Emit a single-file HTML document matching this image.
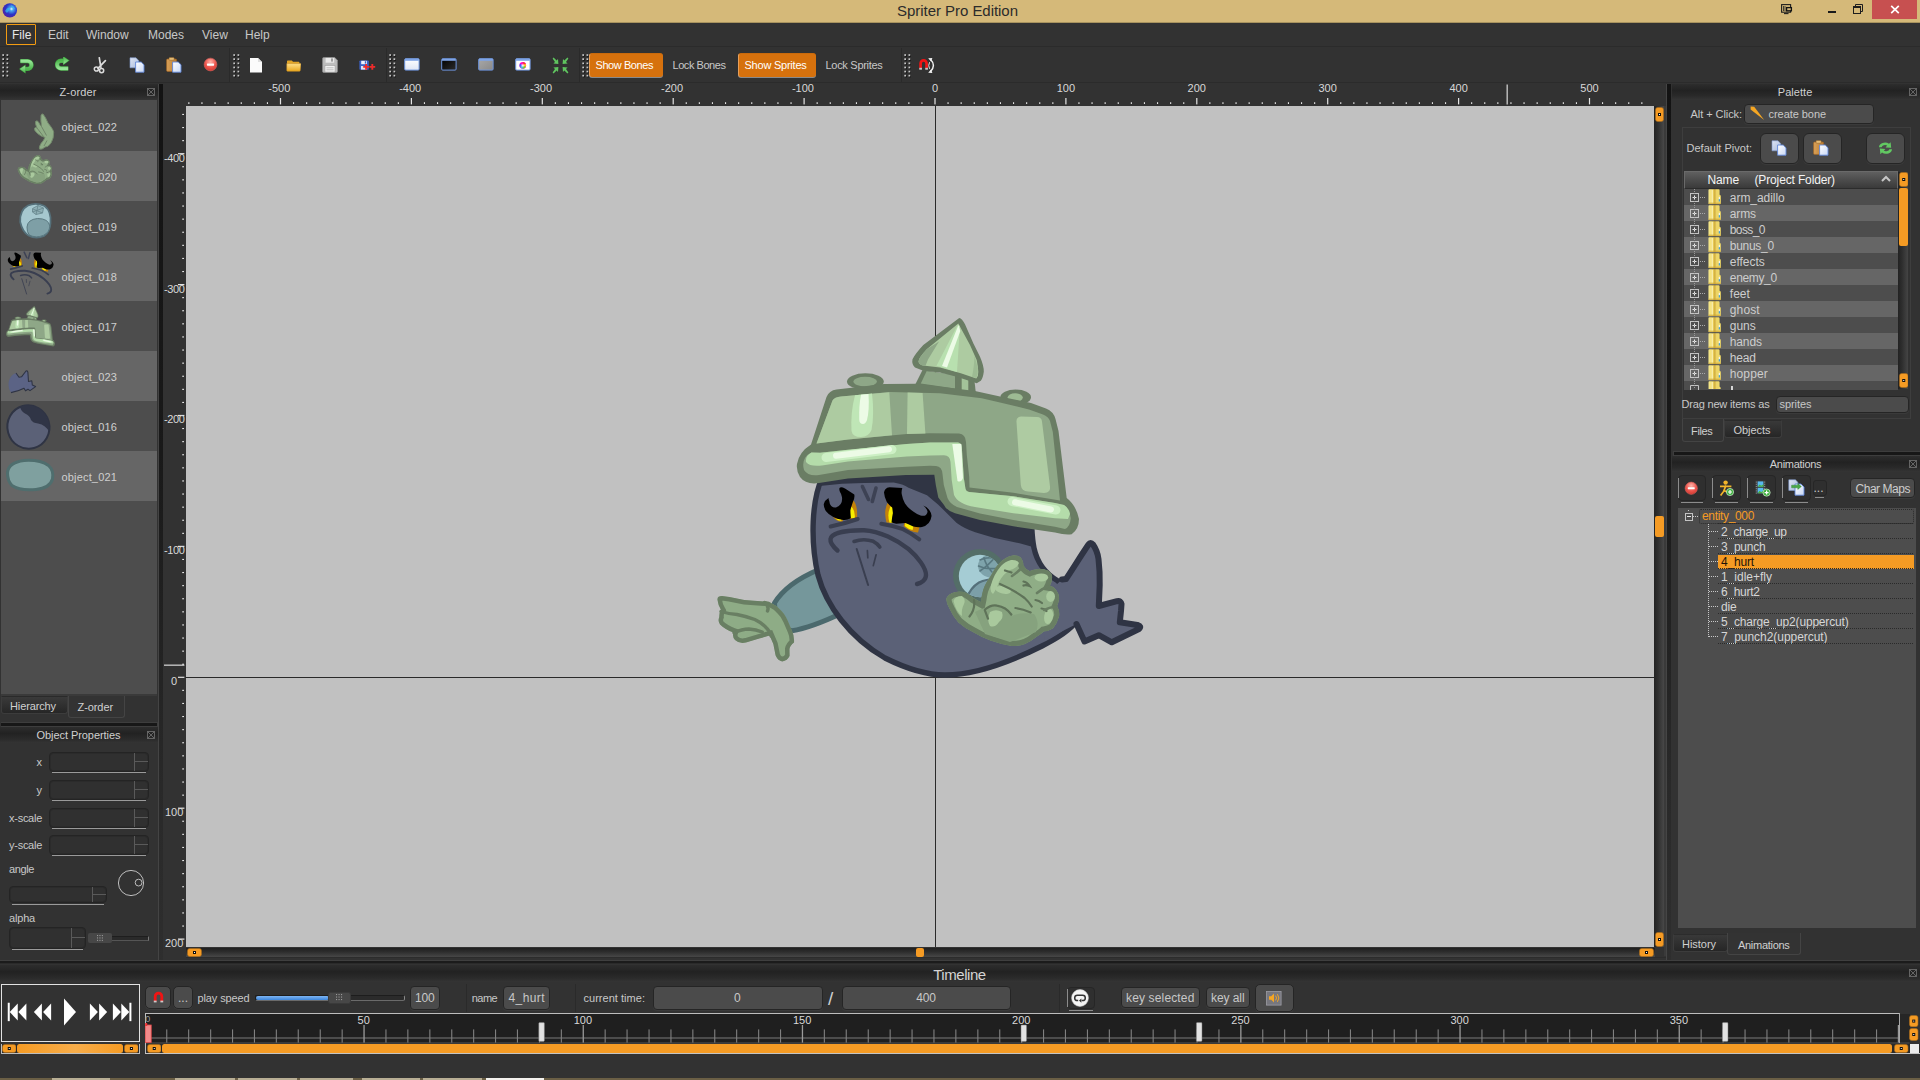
<!DOCTYPE html>
<html><head><meta charset="utf-8"><title>Spriter Pro Edition</title>
<style>
*{box-sizing:border-box;margin:0;padding:0}
html,body{width:1920px;height:1080px;overflow:hidden;background:#323232}
body{font-family:"Liberation Sans",sans-serif;font-size:11px;color:#c8c8c8;position:relative}
.a{position:absolute}
.t{position:absolute;white-space:nowrap}
.grip{position:absolute;width:6px;height:22px;top:54px}
.or{background:#f59b24}
</style></head><body>

<svg width="0" height="0" style="position:absolute"><defs>
<radialGradient id="gl" cx="0.62" cy="0.4" r="0.7"><stop offset="0" stop-color="#e8f4ff"/><stop offset="0.18" stop-color="#4aa8f0"/><stop offset="0.55" stop-color="#2b35c8"/><stop offset="1" stop-color="#5a1e9a"/></radialGradient>
<linearGradient id="gGreen" x1="0" y1="0" x2="0" y2="1"><stop offset="0" stop-color="#96e496"/><stop offset="1" stop-color="#4fb84f"/></linearGradient>
<linearGradient id="gPage" x1="0" y1="0" x2="1" y2="1"><stop offset="0" stop-color="#ffffff"/><stop offset="1" stop-color="#c9d8f5"/></linearGradient>
<linearGradient id="gPageB" x1="0" y1="0" x2="1" y2="1"><stop offset="0" stop-color="#dfe6f4"/><stop offset="1" stop-color="#a9bbdc"/></linearGradient>
<linearGradient id="gClip" x1="0" y1="0" x2="1" y2="0"><stop offset="0" stop-color="#d9a25a"/><stop offset="1" stop-color="#b87a30"/></linearGradient>
<radialGradient id="gRed" cx="0.5" cy="0.3" r="0.7"><stop offset="0" stop-color="#ffb4aa"/><stop offset="0.6" stop-color="#ee564e"/><stop offset="1" stop-color="#d03a32"/></radialGradient>
<linearGradient id="gFold" x1="0" y1="0" x2="0" y2="1"><stop offset="0" stop-color="#ffe08a"/><stop offset="1" stop-color="#e9a820"/></linearGradient>
<linearGradient id="gWin" x1="0" y1="0" x2="0" y2="1"><stop offset="0" stop-color="#ffffff"/><stop offset="1" stop-color="#dfe6f6"/></linearGradient>
<linearGradient id="gWinK" x1="0" y1="0" x2="1" y2="1"><stop offset="0" stop-color="#000"/><stop offset="1" stop-color="#2c2c2c"/></linearGradient>
<linearGradient id="gWinG" x1="0" y1="0" x2="1" y2="1"><stop offset="0" stop-color="#a8a8a8"/><stop offset="1" stop-color="#8a8a8a"/></linearGradient>
<linearGradient id="gFolder2" x1="0" y1="0" x2="1" y2="0"><stop offset="0" stop-color="#f6e88c"/><stop offset="0.3" stop-color="#f3df74"/><stop offset="0.4" stop-color="#e8cc58"/><stop offset="0.52" stop-color="#cfa93a"/><stop offset="0.62" stop-color="#ecd466"/><stop offset="1" stop-color="#f0da68"/></linearGradient>

<symbol id="iCopy" viewBox="0 0 16 16"><path d="M1 .8h6l2.6 2.6v7.4H1z" fill="url(#gPageB)" stroke="#7f9ad0" stroke-width=".6"/><path d="M6.6 5h5.6l2.8 2.8v7.4H6.6z" fill="url(#gPage)" stroke="#5f86d8" stroke-width=".9"/></symbol>
<symbol id="iPaste" viewBox="0 0 16 16"><rect x=".6" y="2" width="10" height="12.4" rx="1" fill="url(#gClip)" stroke="#a4651f" stroke-width=".6"/><rect x="3" y=".6" width="5.2" height="2.6" rx=".8" fill="#e8c07a" stroke="#8a5a20" stroke-width=".5"/><path d="M6.6 5h5.6l2.8 2.8v7.4H6.6z" fill="url(#gPage)" stroke="#5f86d8" stroke-width=".9"/></symbol>
<symbol id="iDel" viewBox="0 0 16 16"><circle cx="8" cy="8" r="6.8" fill="url(#gRed)" stroke="#d9635e" stroke-width=".6"/><rect x="4.2" y="6.8" width="7.6" height="2.4" rx=".6" fill="#fff"/></symbol>
<symbol id="iFolder" viewBox="0 0 13 16"><path d="M.3 1.3q0-1 1-1h9.4q1 0 1 1v4.6q1.3.4 1.3 1.6v7.2q0 .9-1 .9H1.3q-1 0-1-1z" fill="url(#gFolder2)"/><path d="M4.2 1v14" stroke="#fffbe0" stroke-width=".8" opacity=".9"/><path d="M.3 14.6h12.4" stroke="#c9a030" stroke-width=".9"/><rect x="10.9" y="8" width="1.1" height="2.6" fill="#f4f8ff"/><rect x="10.9" y="10.4" width="1.1" height="2.4" fill="#2f9be8"/></symbol>
<symbol id="iX" viewBox="0 0 8 8"><rect x=".5" y=".5" width="7" height="7" fill="none" stroke="#6c6c6c" stroke-width=".9"/><path d="M.8 .8l6.4 6.4M7.2 .8L.8 7.2" stroke="#6c6c6c" stroke-width=".9"/></symbol>
</defs></svg>

<div class="a" style="left:0px;top:0px;width:1920px;height:23px;background:#d5b979;"></div>
<div class="a" style="left:0px;top:22px;width:1920px;height:1px;background:#a8935f;"></div>
<div class="t" style="left:897.0px;top:2px;font-size:15px;line-height:17px;height:17px;letter-spacing:-0.04px;color:#2b2b2b;">Spriter Pro Edition</div>
<svg class="a" style="left:2px;top:2px" width="16" height="16" viewBox="0 0 16 16"><circle cx="7.8" cy="8.4" r="7.2" fill="url(#gl)"/><path d="M3 9q2-4 5-3q-1 3-3 5zM9 3q3 1 4 4q-3 0-4-4z" fill="#35c0f0" opacity=".7"/></svg>
<svg class="a" style="left:1780px;top:3px" width="14" height="13" viewBox="0 0 14 13"><rect x="1.6" y="1.6" width="9" height="7.6" fill="none" stroke="#1e1e1e" stroke-width="1.1"/><path d="M3.5 3v5M5 3v5" stroke="#1e1e1e" stroke-width=".8"/><rect x="6.6" y="4.6" width="4.8" height="3.2" fill="#d5b979" stroke="#111" stroke-width="1.3"/><path d="M4 10.6h4.5" stroke="#1e1e1e" stroke-width="1.1"/></svg>
<div class="a" style="left:1828px;top:11px;width:8px;height:2px;background:#1a1a1a;"></div>
<svg class="a" style="left:1852px;top:3px" width="12" height="12" viewBox="0 0 12 12"><path d="M3.5 3.5v-2h7v7h-2" fill="none" stroke="#1e1e1e" stroke-width="1"/><rect x="1.5" y="3.5" width="7" height="7" fill="none" stroke="#1e1e1e" stroke-width="1"/><path d="M1.5 4.2h7" stroke="#1e1e1e" stroke-width="1.6"/></svg>
<div class="a" style="left:1872px;top:0px;width:45px;height:19px;background:#c75050;"></div>
<svg class="a" style="left:1890px;top:5px" width="10" height="9" viewBox="0 0 10 9"><path d="M1.2 .8L8.8 8.2M8.8 .8L1.2 8.2" stroke="#fff" stroke-width="1.7"/></svg>
<div class="a" style="left:0px;top:23px;width:1920px;height:23px;background:#323232;"></div>
<div class="a" style="left:6px;top:24px;width:30px;height:21px;background:transparent;border:1px solid #f39c12;border-radius:1px"></div>
<div class="t" style="left:12.0px;top:28px;font-size:12px;line-height:14px;height:14px;color:#e8e8e8;">File</div>
<div class="t" style="left:48.0px;top:28px;font-size:12px;line-height:14px;height:14px;">Edit</div>
<div class="t" style="left:86.0px;top:28px;font-size:12px;line-height:14px;height:14px;">Window</div>
<div class="t" style="left:148.0px;top:28px;font-size:12px;line-height:14px;height:14px;">Modes</div>
<div class="t" style="left:202.0px;top:28px;font-size:12px;line-height:14px;height:14px;">View</div>
<div class="t" style="left:245.0px;top:28px;font-size:12px;line-height:14px;height:14px;">Help</div>
<div class="a" style="left:0px;top:46px;width:1920px;height:1px;background:#2b2b2b;"></div>
<div class="a" style="left:0px;top:82px;width:1920px;height:1px;background:#2b2b2b;"></div>
<svg class="a" style="left:2px;top:54px" width="8" height="24" viewBox="0 0 8 24"><rect x="1.1" y="1.1" width="1.7" height="1.7" fill="#161616"/><rect x="0.3" y="0.2" width="1.7" height="1.7" fill="#c6c6c6"/><rect x="5.2" y="1.1" width="1.7" height="1.7" fill="#161616"/><rect x="4.5" y="0.2" width="1.7" height="1.7" fill="#c6c6c6"/><rect x="1.1" y="5.2" width="1.7" height="1.7" fill="#161616"/><rect x="0.3" y="4.3" width="1.7" height="1.7" fill="#c6c6c6"/><rect x="5.2" y="5.2" width="1.7" height="1.7" fill="#161616"/><rect x="4.5" y="4.3" width="1.7" height="1.7" fill="#c6c6c6"/><rect x="1.1" y="9.4" width="1.7" height="1.7" fill="#161616"/><rect x="0.3" y="8.5" width="1.7" height="1.7" fill="#c6c6c6"/><rect x="5.2" y="9.4" width="1.7" height="1.7" fill="#161616"/><rect x="4.5" y="8.5" width="1.7" height="1.7" fill="#c6c6c6"/><rect x="1.1" y="13.5" width="1.7" height="1.7" fill="#161616"/><rect x="0.3" y="12.6" width="1.7" height="1.7" fill="#c6c6c6"/><rect x="5.2" y="13.5" width="1.7" height="1.7" fill="#161616"/><rect x="4.5" y="12.6" width="1.7" height="1.7" fill="#c6c6c6"/><rect x="1.1" y="17.6" width="1.7" height="1.7" fill="#161616"/><rect x="0.3" y="16.7" width="1.7" height="1.7" fill="#c6c6c6"/><rect x="5.2" y="17.6" width="1.7" height="1.7" fill="#161616"/><rect x="4.5" y="16.7" width="1.7" height="1.7" fill="#c6c6c6"/><rect x="1.1" y="21.7" width="1.7" height="1.7" fill="#161616"/><rect x="0.3" y="20.8" width="1.7" height="1.7" fill="#c6c6c6"/><rect x="5.2" y="21.7" width="1.7" height="1.7" fill="#161616"/><rect x="4.5" y="20.8" width="1.7" height="1.7" fill="#c6c6c6"/></svg>
<svg class="a" style="left:232.5px;top:54px" width="8" height="24" viewBox="0 0 8 24"><rect x="1.1" y="1.1" width="1.7" height="1.7" fill="#161616"/><rect x="0.3" y="0.2" width="1.7" height="1.7" fill="#c6c6c6"/><rect x="5.2" y="1.1" width="1.7" height="1.7" fill="#161616"/><rect x="4.5" y="0.2" width="1.7" height="1.7" fill="#c6c6c6"/><rect x="1.1" y="5.2" width="1.7" height="1.7" fill="#161616"/><rect x="0.3" y="4.3" width="1.7" height="1.7" fill="#c6c6c6"/><rect x="5.2" y="5.2" width="1.7" height="1.7" fill="#161616"/><rect x="4.5" y="4.3" width="1.7" height="1.7" fill="#c6c6c6"/><rect x="1.1" y="9.4" width="1.7" height="1.7" fill="#161616"/><rect x="0.3" y="8.5" width="1.7" height="1.7" fill="#c6c6c6"/><rect x="5.2" y="9.4" width="1.7" height="1.7" fill="#161616"/><rect x="4.5" y="8.5" width="1.7" height="1.7" fill="#c6c6c6"/><rect x="1.1" y="13.5" width="1.7" height="1.7" fill="#161616"/><rect x="0.3" y="12.6" width="1.7" height="1.7" fill="#c6c6c6"/><rect x="5.2" y="13.5" width="1.7" height="1.7" fill="#161616"/><rect x="4.5" y="12.6" width="1.7" height="1.7" fill="#c6c6c6"/><rect x="1.1" y="17.6" width="1.7" height="1.7" fill="#161616"/><rect x="0.3" y="16.7" width="1.7" height="1.7" fill="#c6c6c6"/><rect x="5.2" y="17.6" width="1.7" height="1.7" fill="#161616"/><rect x="4.5" y="16.7" width="1.7" height="1.7" fill="#c6c6c6"/><rect x="1.1" y="21.7" width="1.7" height="1.7" fill="#161616"/><rect x="0.3" y="20.8" width="1.7" height="1.7" fill="#c6c6c6"/><rect x="5.2" y="21.7" width="1.7" height="1.7" fill="#161616"/><rect x="4.5" y="20.8" width="1.7" height="1.7" fill="#c6c6c6"/></svg>
<svg class="a" style="left:389px;top:54px" width="8" height="24" viewBox="0 0 8 24"><rect x="1.1" y="1.1" width="1.7" height="1.7" fill="#161616"/><rect x="0.3" y="0.2" width="1.7" height="1.7" fill="#c6c6c6"/><rect x="5.2" y="1.1" width="1.7" height="1.7" fill="#161616"/><rect x="4.5" y="0.2" width="1.7" height="1.7" fill="#c6c6c6"/><rect x="1.1" y="5.2" width="1.7" height="1.7" fill="#161616"/><rect x="0.3" y="4.3" width="1.7" height="1.7" fill="#c6c6c6"/><rect x="5.2" y="5.2" width="1.7" height="1.7" fill="#161616"/><rect x="4.5" y="4.3" width="1.7" height="1.7" fill="#c6c6c6"/><rect x="1.1" y="9.4" width="1.7" height="1.7" fill="#161616"/><rect x="0.3" y="8.5" width="1.7" height="1.7" fill="#c6c6c6"/><rect x="5.2" y="9.4" width="1.7" height="1.7" fill="#161616"/><rect x="4.5" y="8.5" width="1.7" height="1.7" fill="#c6c6c6"/><rect x="1.1" y="13.5" width="1.7" height="1.7" fill="#161616"/><rect x="0.3" y="12.6" width="1.7" height="1.7" fill="#c6c6c6"/><rect x="5.2" y="13.5" width="1.7" height="1.7" fill="#161616"/><rect x="4.5" y="12.6" width="1.7" height="1.7" fill="#c6c6c6"/><rect x="1.1" y="17.6" width="1.7" height="1.7" fill="#161616"/><rect x="0.3" y="16.7" width="1.7" height="1.7" fill="#c6c6c6"/><rect x="5.2" y="17.6" width="1.7" height="1.7" fill="#161616"/><rect x="4.5" y="16.7" width="1.7" height="1.7" fill="#c6c6c6"/><rect x="1.1" y="21.7" width="1.7" height="1.7" fill="#161616"/><rect x="0.3" y="20.8" width="1.7" height="1.7" fill="#c6c6c6"/><rect x="5.2" y="21.7" width="1.7" height="1.7" fill="#161616"/><rect x="4.5" y="20.8" width="1.7" height="1.7" fill="#c6c6c6"/></svg>
<svg class="a" style="left:582px;top:54px" width="8" height="24" viewBox="0 0 8 24"><rect x="1.1" y="1.1" width="1.7" height="1.7" fill="#161616"/><rect x="0.3" y="0.2" width="1.7" height="1.7" fill="#c6c6c6"/><rect x="5.2" y="1.1" width="1.7" height="1.7" fill="#161616"/><rect x="4.5" y="0.2" width="1.7" height="1.7" fill="#c6c6c6"/><rect x="1.1" y="5.2" width="1.7" height="1.7" fill="#161616"/><rect x="0.3" y="4.3" width="1.7" height="1.7" fill="#c6c6c6"/><rect x="5.2" y="5.2" width="1.7" height="1.7" fill="#161616"/><rect x="4.5" y="4.3" width="1.7" height="1.7" fill="#c6c6c6"/><rect x="1.1" y="9.4" width="1.7" height="1.7" fill="#161616"/><rect x="0.3" y="8.5" width="1.7" height="1.7" fill="#c6c6c6"/><rect x="5.2" y="9.4" width="1.7" height="1.7" fill="#161616"/><rect x="4.5" y="8.5" width="1.7" height="1.7" fill="#c6c6c6"/><rect x="1.1" y="13.5" width="1.7" height="1.7" fill="#161616"/><rect x="0.3" y="12.6" width="1.7" height="1.7" fill="#c6c6c6"/><rect x="5.2" y="13.5" width="1.7" height="1.7" fill="#161616"/><rect x="4.5" y="12.6" width="1.7" height="1.7" fill="#c6c6c6"/><rect x="1.1" y="17.6" width="1.7" height="1.7" fill="#161616"/><rect x="0.3" y="16.7" width="1.7" height="1.7" fill="#c6c6c6"/><rect x="5.2" y="17.6" width="1.7" height="1.7" fill="#161616"/><rect x="4.5" y="16.7" width="1.7" height="1.7" fill="#c6c6c6"/><rect x="1.1" y="21.7" width="1.7" height="1.7" fill="#161616"/><rect x="0.3" y="20.8" width="1.7" height="1.7" fill="#c6c6c6"/><rect x="5.2" y="21.7" width="1.7" height="1.7" fill="#161616"/><rect x="4.5" y="20.8" width="1.7" height="1.7" fill="#c6c6c6"/></svg>
<svg class="a" style="left:904px;top:54px" width="8" height="24" viewBox="0 0 8 24"><rect x="1.1" y="1.1" width="1.7" height="1.7" fill="#161616"/><rect x="0.3" y="0.2" width="1.7" height="1.7" fill="#c6c6c6"/><rect x="5.2" y="1.1" width="1.7" height="1.7" fill="#161616"/><rect x="4.5" y="0.2" width="1.7" height="1.7" fill="#c6c6c6"/><rect x="1.1" y="5.2" width="1.7" height="1.7" fill="#161616"/><rect x="0.3" y="4.3" width="1.7" height="1.7" fill="#c6c6c6"/><rect x="5.2" y="5.2" width="1.7" height="1.7" fill="#161616"/><rect x="4.5" y="4.3" width="1.7" height="1.7" fill="#c6c6c6"/><rect x="1.1" y="9.4" width="1.7" height="1.7" fill="#161616"/><rect x="0.3" y="8.5" width="1.7" height="1.7" fill="#c6c6c6"/><rect x="5.2" y="9.4" width="1.7" height="1.7" fill="#161616"/><rect x="4.5" y="8.5" width="1.7" height="1.7" fill="#c6c6c6"/><rect x="1.1" y="13.5" width="1.7" height="1.7" fill="#161616"/><rect x="0.3" y="12.6" width="1.7" height="1.7" fill="#c6c6c6"/><rect x="5.2" y="13.5" width="1.7" height="1.7" fill="#161616"/><rect x="4.5" y="12.6" width="1.7" height="1.7" fill="#c6c6c6"/><rect x="1.1" y="17.6" width="1.7" height="1.7" fill="#161616"/><rect x="0.3" y="16.7" width="1.7" height="1.7" fill="#c6c6c6"/><rect x="5.2" y="17.6" width="1.7" height="1.7" fill="#161616"/><rect x="4.5" y="16.7" width="1.7" height="1.7" fill="#c6c6c6"/><rect x="1.1" y="21.7" width="1.7" height="1.7" fill="#161616"/><rect x="0.3" y="20.8" width="1.7" height="1.7" fill="#c6c6c6"/><rect x="5.2" y="21.7" width="1.7" height="1.7" fill="#161616"/><rect x="4.5" y="20.8" width="1.7" height="1.7" fill="#c6c6c6"/></svg>
<div class="a" style="left:229px;top:48px;width:1px;height:34px;background:#2a2a2a;"></div>
<div class="a" style="left:386px;top:48px;width:1px;height:34px;background:#2a2a2a;"></div>
<div class="a" style="left:578.5px;top:48px;width:1px;height:34px;background:#2a2a2a;"></div>
<div class="a" style="left:901px;top:48px;width:1px;height:34px;background:#2a2a2a;"></div>
<svg class="a" style="left:19.2px;top:57.8px" width="15" height="16" viewBox="0 0 15 16"><path d="M1.4 3.1H8.6A3.9 3.9 0 0 1 8.6 10.9H6" fill="none" stroke="#3f9f3f" stroke-width="4.4"/><path d="M0 11.1L6.6 6.4V15.6Z" fill="#3f9f3f"/><path d="M1.4 3.1H8.6A3.9 3.9 0 0 1 8.6 10.9H6" fill="none" stroke="url(#gGreen)" stroke-width="3.4"/><path d="M.9 11.1L6.1 7.4V14.7Z" fill="url(#gGreen)"/></svg>
<svg class="a" style="left:55.2px;top:57.2px" width="15" height="16" viewBox="0 0 15 16"><g transform="translate(14.6,14.6) scale(-1,-1)"><path d="M1.4 3.1H8.6A3.9 3.9 0 0 1 8.6 10.9H6" fill="none" stroke="#3f9f3f" stroke-width="4.4"/><path d="M0 11.1L6.6 6.4V15.6Z" fill="#3f9f3f"/><path d="M1.4 3.1H8.6A3.9 3.9 0 0 1 8.6 10.9H6" fill="none" stroke="url(#gGreen)" stroke-width="3.4"/><path d="M.9 11.1L6.1 7.4V14.7Z" fill="url(#gGreen)"/></g></svg>
<svg class="a" style="left:93px;top:57px" width="14" height="17" viewBox="0 0 14 17"><path d="M6.3 .8L7.9 10.4M12.4 3.6L5 11.4" stroke="#dcdcdc" stroke-width="1.7" fill="none" stroke-linecap="round"/><circle cx="3.4" cy="12" r="2.1" fill="none" stroke="#dcdcdc" stroke-width="1.5"/><circle cx="8.6" cy="13.6" r="2.1" fill="none" stroke="#dcdcdc" stroke-width="1.5"/></svg>
<svg class="a" style="left:129px;top:57px" width="16" height="16"><use href="#iCopy"/></svg>
<svg class="a" style="left:166px;top:57px" width="16" height="16"><use href="#iPaste"/></svg>
<svg class="a" style="left:203px;top:57px" width="15" height="15"><use href="#iDel"/></svg>
<svg class="a" style="left:249px;top:57px" width="14" height="16" viewBox="0 0 14 16"><path d="M1 1h8l4 4v10.4H1z" fill="#fbfbfb"/><path d="M9 1v4h4z" fill="#e0e0e0"/></svg>
<svg class="a" style="left:285.5px;top:59px" width="15" height="13" viewBox="0 0 15 13"><path d="M1 2.2q0-.8.8-.8h4l1.2 1.4h5.6q.8 0 .8.8v1.2H1z" fill="#e2a528"/><path d="M.8 4.6h13.6q.6 0 .5.7l-.7 6.3q-.1.6-.7.6H1.5q-.6 0-.7-.6z" fill="url(#gFold)" stroke="#d8961e" stroke-width=".5"/></svg>
<svg class="a" style="left:322px;top:57px" width="16" height="16" viewBox="0 0 16 16"><path d="M.6 1.6q0-1 1-1h11.2l2.6 2.6v11.2q0 1-1 1H1.6q-1 0-1-1z" fill="#bdbdbd" stroke="#8f8f8f" stroke-width=".7"/><rect x="3.6" y=".9" width="8.6" height="4.8" fill="#e9e9e9"/><rect x="9.2" y="1.4" width="1.6" height="3.2" fill="#8a8a8a"/><rect x="3" y="8.6" width="10" height="6.4" fill="#f2f2f2" stroke="#9a9a9a" stroke-width=".5"/><path d="M4.4 10.8h7.2M4.4 12.8h7.2" stroke="#aaa" stroke-width=".7"/></svg>
<svg class="a" style="left:359px;top:59.5px" width="17" height="11" viewBox="0 0 17 11"><rect x=".4" y=".4" width="9.4" height="9.4" rx=".8" fill="#3b62c8"/><rect x="2.2" y=".8" width="5.6" height="3.4" fill="#eef1fa"/><rect x="5.8" y="1.2" width="1.2" height="2.4" fill="#3b62c8"/><rect x="2" y="6" width="6" height="3.6" fill="#dfe5f5"/><path d="M4.2 6.9h5.8M7.1 4v5.8M10.4 6.9h5.8M13.3 4v5.8" stroke="#ee2b2b" stroke-width="1.9"/></svg>
<svg class="a" style="left:404px;top:58px" width="16" height="13" viewBox="0 0 16 13"><rect x=".7" y=".7" width="14.4" height="11.4" rx="1" fill="url(#gWin)" stroke="#6d94dd" stroke-width="1"/><path d="M1 1.8h13.8" stroke="#7ea4e6" stroke-width="2"/></svg>
<svg class="a" style="left:441px;top:58px" width="16" height="13" viewBox="0 0 16 13"><rect x=".7" y=".7" width="14.4" height="11.4" rx="1" fill="url(#gWinK)" stroke="#6d94dd" stroke-width="1"/><path d="M1 1.8h13.8" stroke="#7ea4e6" stroke-width="2"/></svg>
<svg class="a" style="left:478px;top:58px" width="16" height="13" viewBox="0 0 16 13"><rect x=".7" y=".7" width="14.4" height="11.4" rx="1" fill="url(#gWinG)" stroke="#6d94dd" stroke-width="1"/><path d="M1 1.8h13.8" stroke="#7ea4e6" stroke-width="2"/></svg>
<svg class="a" style="left:515px;top:58px" width="16" height="13" viewBox="0 0 16 13"><defs><radialGradient id="cw"><stop offset="0" stop-color="#fff"/><stop offset="1" stop-color="#fff" stop-opacity="0"/></radialGradient></defs><rect x=".7" y=".7" width="14.4" height="11.4" rx="1" fill="#fff" stroke="#6d94dd" stroke-width="1"/><path d="M1 1.8h13.8" stroke="#7ea4e6" stroke-width="2"/><circle cx="7.8" cy="7.4" r="3.3" fill="#f0c"/><path d="M7.8 7.4L7.8 4.1A3.3 3.3 0 0 1 10.7 5.8z" fill="#f33"/><path d="M7.8 7.4L10.7 5.8A3.3 3.3 0 0 1 10.7 9z" fill="#fc0"/><path d="M7.8 7.4L10.7 9A3.3 3.3 0 0 1 7.8 10.7z" fill="#6d3"/><path d="M7.8 7.4L7.8 10.7A3.3 3.3 0 0 1 4.9 9z" fill="#3cd"/><path d="M7.8 7.4L4.9 9A3.3 3.3 0 0 1 4.9 5.8z" fill="#46f"/><circle cx="7.8" cy="7.4" r="2.2" fill="url(#cw)"/></svg>
<svg class="a" style="left:552px;top:57px" width="17" height="17" viewBox="0 0 17 17"><path d="M.6 1.4l1-1 3 3 1.4-1.4.4 5-5-.4 1.6-1.6z" fill="#5fc45f"/><g transform="translate(17,0) scale(-1,1)"><path d="M.6 1.4l1-1 3 3 1.4-1.4.4 5-5-.4 1.6-1.6z" fill="#5fc45f"/></g><g transform="translate(0,17) scale(1,-1)"><path d="M.6 1.4l1-1 3 3 1.4-1.4.4 5-5-.4 1.6-1.6z" fill="#5fc45f"/></g><g transform="translate(17,17) scale(-1,-1)"><path d="M.6 1.4l1-1 3 3 1.4-1.4.4 5-5-.4 1.6-1.6z" fill="#5fc45f"/></g></svg>
<div class="a" style="left:588.5px;top:53px;width:74px;height:23.5px;background:#d6710d;border-radius:3px;border-left:1px solid #e9a05a;border-top:1px solid #c96a0c;box-shadow:0 1px 0 #8a8a8a"></div>
<div class="a" style="left:737.5px;top:53px;width:78px;height:23.5px;background:#d6710d;border-radius:3px;border-left:1px solid #e9a05a;border-top:1px solid #c96a0c;box-shadow:0 1px 0 #8a8a8a"></div>
<div class="t" style="left:595.5px;top:59px;font-size:11px;line-height:12px;height:12px;letter-spacing:-0.43px;color:#fff;">Show Bones</div>
<div class="t" style="left:672.5px;top:59px;font-size:11px;line-height:12px;height:12px;letter-spacing:-0.45px;">Lock Bones</div>
<div class="t" style="left:744.5px;top:59px;font-size:11px;line-height:12px;height:12px;letter-spacing:-0.23px;color:#fff;">Show Sprites</div>
<div class="t" style="left:825.5px;top:59px;font-size:11px;line-height:12px;height:12px;letter-spacing:-0.29px;">Lock Sprites</div>
<svg class="a" style="left:919px;top:57px" width="18" height="17" viewBox="0 0 18 17"><path d="M1.6 11.4V6.4a3 3 0 0 1 6 0V11.4" fill="none" stroke="#f01414" stroke-width="2.7"/><rect x=".25" y="10.8" width="2.7" height="1.9" fill="#c4c4c4"/><rect x="6.25" y="10.8" width="2.7" height="1.9" fill="#c4c4c4"/><path d="M11.6 2.6Q17.2 8.4 11.6 14.4" fill="none" stroke="#f2f2f2" stroke-width="1.4"/><path d="M9.2 1.2l4.2-.2-1.4 3.6zM9.2 15.8l4.2.2-1.4-3.6z" fill="#f2f2f2"/><path d="M10.6 5.2Q8.8 8.4 10.6 11.8" fill="none" stroke="#e0e0e0" stroke-width="1"/></svg>
<div class="a" style="left:0px;top:83px;width:159px;height:880px;background:#323232;"></div>
<div class="a" style="left:159px;top:84px;width:4.2px;height:876px;background:linear-gradient(#131313,#191919 42%,#292929 80%,#2e2e2e);"></div>
<div class="a" style="left:158px;top:84px;width:1px;height:876px;background:#444;"></div>
<div class="a" style="left:0px;top:84px;width:158px;height:16px;background:linear-gradient(#2d2d2d,#222 40%,#2a2a2a 75%,#343434);"></div>
<div class="t" style="left:59.5px;top:86px;font-size:11px;line-height:12px;height:12px;letter-spacing:0.13px;color:#d0d0d0;">Z-order</div>
<svg class="a" style="left:147px;top:88px" width="8" height="8"><use href="#iX"/></svg>
<div class="a" style="left:1px;top:100px;width:156px;height:595px;background:#4d4d4d;"></div>
<div class="t" style="left:61.5px;top:121px;font-size:11px;line-height:12px;height:12px;letter-spacing:0.17px;color:#cfcfcf;">object_022</div>
<div class="a" style="left:1px;top:151px;width:156px;height:50px;background:#666666;"></div>
<div class="t" style="left:61.5px;top:171px;font-size:11px;line-height:12px;height:12px;letter-spacing:0.17px;color:#cfcfcf;">object_020</div>
<div class="t" style="left:61.5px;top:221px;font-size:11px;line-height:12px;height:12px;letter-spacing:0.17px;color:#cfcfcf;">object_019</div>
<div class="a" style="left:1px;top:251px;width:156px;height:50px;background:#666666;"></div>
<div class="t" style="left:61.5px;top:271px;font-size:11px;line-height:12px;height:12px;letter-spacing:0.17px;color:#cfcfcf;">object_018</div>
<div class="t" style="left:61.5px;top:321px;font-size:11px;line-height:12px;height:12px;letter-spacing:0.17px;color:#cfcfcf;">object_017</div>
<div class="a" style="left:1px;top:351px;width:156px;height:50px;background:#666666;"></div>
<div class="t" style="left:61.5px;top:371px;font-size:11px;line-height:12px;height:12px;letter-spacing:0.17px;color:#cfcfcf;">object_023</div>
<div class="t" style="left:61.5px;top:421px;font-size:11px;line-height:12px;height:12px;letter-spacing:0.17px;color:#cfcfcf;">object_016</div>
<div class="a" style="left:1px;top:451px;width:156px;height:50px;background:#666666;"></div>
<div class="t" style="left:61.5px;top:471px;font-size:11px;line-height:12px;height:12px;letter-spacing:0.17px;color:#cfcfcf;">object_021</div>
<div class="a" style="left:1px;top:694px;width:156px;height:1.5px;background:#3a3a3a;"></div>
<div class="a" style="left:1px;top:696px;width:66.5px;height:18px;background:linear-gradient(#3a3a3a,#262626);border:1px solid #3c3c3c;border-top-color:#2a2a2a;border-radius:0 0 3px 3px"></div>
<div class="t" style="left:10.0px;top:700px;font-size:11px;line-height:12px;height:12px;letter-spacing:-0.12px;color:#d0d0d0;">Hierarchy</div>
<div class="a" style="left:67.5px;top:696px;width:57.5px;height:21.5px;background:#333;border:1px solid #444;border-top:none;border-radius:0 0 3px 3px"></div>
<div class="t" style="left:77.5px;top:701px;font-size:11px;line-height:12px;height:12px;letter-spacing:-0.08px;color:#d0d0d0;">Z-order</div>
<div class="a" style="left:1px;top:722px;width:156.5px;height:4.5px;background:#171717;border:1px solid #3d3d3d;border-left:none"></div>
<div class="a" style="left:0px;top:727px;width:158px;height:16px;background:linear-gradient(#2d2d2d,#222 40%,#2a2a2a 75%,#343434);"></div>
<div class="t" style="left:36.5px;top:729px;font-size:11px;line-height:12px;height:12px;letter-spacing:-0.06px;color:#d0d0d0;">Object Properties</div>
<svg class="a" style="left:147px;top:731px" width="8" height="8"><use href="#iX"/></svg>
<div class="a" style="left:49px;top:752px;width:99.5px;height:19.5px;background:#303030;border:1px solid #242424;border-radius:4px;box-shadow:inset 0 0 0 1px #2b2b2b"></div>
<div class="a" style="left:133.5px;top:753px;width:1px;height:17.5px;background:#5a5a5a;"></div>
<div class="a" style="left:134.5px;top:761.25px;width:13px;height:1px;background:#5a5a5a;"></div>
<div class="a" style="left:52px;top:772.1px;width:93.5px;height:1px;background:#9a9a9a;"></div>
<div class="t" style="left:36.5px;top:756px;font-size:11px;line-height:12px;height:12px;">x</div>
<div class="a" style="left:49px;top:780px;width:99.5px;height:19.5px;background:#303030;border:1px solid #242424;border-radius:4px;box-shadow:inset 0 0 0 1px #2b2b2b"></div>
<div class="a" style="left:133.5px;top:781px;width:1px;height:17.5px;background:#5a5a5a;"></div>
<div class="a" style="left:134.5px;top:789.25px;width:13px;height:1px;background:#5a5a5a;"></div>
<div class="a" style="left:52px;top:800.1px;width:93.5px;height:1px;background:#9a9a9a;"></div>
<div class="t" style="left:36.5px;top:784px;font-size:11px;line-height:12px;height:12px;">y</div>
<div class="a" style="left:49px;top:808px;width:99.5px;height:19.5px;background:#303030;border:1px solid #242424;border-radius:4px;box-shadow:inset 0 0 0 1px #2b2b2b"></div>
<div class="a" style="left:133.5px;top:809px;width:1px;height:17.5px;background:#5a5a5a;"></div>
<div class="a" style="left:134.5px;top:817.25px;width:13px;height:1px;background:#5a5a5a;"></div>
<div class="a" style="left:52px;top:828.1px;width:93.5px;height:1px;background:#9a9a9a;"></div>
<div class="t" style="left:9.0px;top:812px;font-size:11px;line-height:12px;height:12px;letter-spacing:-0.26px;">x-scale</div>
<div class="a" style="left:49px;top:835px;width:99.5px;height:19.5px;background:#303030;border:1px solid #242424;border-radius:4px;box-shadow:inset 0 0 0 1px #2b2b2b"></div>
<div class="a" style="left:133.5px;top:836px;width:1px;height:17.5px;background:#5a5a5a;"></div>
<div class="a" style="left:134.5px;top:844.25px;width:13px;height:1px;background:#5a5a5a;"></div>
<div class="a" style="left:52px;top:855.1px;width:93.5px;height:1px;background:#9a9a9a;"></div>
<div class="t" style="left:9.0px;top:839px;font-size:11px;line-height:12px;height:12px;letter-spacing:-0.26px;">y-scale</div>
<div class="t" style="left:9.0px;top:863px;font-size:11px;line-height:12px;height:12px;letter-spacing:-0.38px;">angle</div>
<div class="a" style="left:9px;top:885.5px;width:97.5px;height:17.5px;background:#303030;border:1px solid #242424;border-radius:4px;box-shadow:inset 0 0 0 1px #2b2b2b"></div>
<div class="a" style="left:91.5px;top:886.5px;width:1px;height:15.5px;background:#5a5a5a;"></div>
<div class="a" style="left:92.5px;top:893.75px;width:13px;height:1px;background:#5a5a5a;"></div>
<div class="a" style="left:12px;top:903.6px;width:91.5px;height:1px;background:#9a9a9a;"></div>
<svg class="a" style="left:116px;top:868px" width="30" height="30" viewBox="0 0 30 30"><circle cx="15" cy="15" r="12.6" fill="none" stroke="#bdbdbd" stroke-width="1"/><circle cx="22.6" cy="14.6" r="3.4" fill="none" stroke="#bdbdbd" stroke-width="1"/></svg>
<div class="t" style="left:9.0px;top:912px;font-size:11px;line-height:12px;height:12px;letter-spacing:-0.18px;">alpha</div>
<div class="a" style="left:9px;top:927px;width:76.5px;height:21.5px;background:#303030;border:1px solid #242424;border-radius:4px;box-shadow:inset 0 0 0 1px #2b2b2b"></div>
<div class="a" style="left:70.5px;top:928px;width:1px;height:19.5px;background:#5a5a5a;"></div>
<div class="a" style="left:71.5px;top:937.25px;width:13px;height:1px;background:#5a5a5a;"></div>
<div class="a" style="left:12px;top:949.1px;width:70.5px;height:1px;background:#9a9a9a;"></div>
<div class="a" style="left:111px;top:936px;width:37.5px;height:4.5px;background:#2a2a2a;border:1px solid #1e1e1e;border-right:1px solid #777;border-bottom:1px solid #555"></div>
<div class="a" style="left:88px;top:932.5px;width:23.5px;height:10.5px;background:#474747;border-radius:2px"></div>
<svg class="a" style="left:96.5px;top:934.6px" width="7" height="7" viewBox="0 0 7 7"><rect x="0.0" y="0.0" width="1.1" height="1.1" fill="#9a9a9a"/><rect x="2.4" y="0.0" width="1.1" height="1.1" fill="#9a9a9a"/><rect x="4.8" y="0.0" width="1.1" height="1.1" fill="#9a9a9a"/><rect x="0.0" y="2.4" width="1.1" height="1.1" fill="#9a9a9a"/><rect x="2.4" y="2.4" width="1.1" height="1.1" fill="#9a9a9a"/><rect x="4.8" y="2.4" width="1.1" height="1.1" fill="#9a9a9a"/><rect x="0.0" y="4.8" width="1.1" height="1.1" fill="#9a9a9a"/><rect x="2.4" y="4.8" width="1.1" height="1.1" fill="#9a9a9a"/><rect x="4.8" y="4.8" width="1.1" height="1.1" fill="#9a9a9a"/></svg>
<div class="a" style="left:163.5px;top:84px;width:1504px;height:22px;background:#323232;"></div>
<div class="a" style="left:163.5px;top:84px;width:22.5px;height:876px;background:#323232;"></div>
<div class="a" style="left:186px;top:106px;width:1468px;height:841px;background:#c1c1c1;"></div>
<svg class="a" style="left:0px;top:0px" width="1700" height="960" viewBox="0 0 1700 960"><rect x="188.3" y="102.2" width="1.1" height="1.8" fill="#e4e4e4"/><rect x="201.4" y="102.2" width="1.1" height="1.8" fill="#e4e4e4"/><rect x="214.5" y="102.2" width="1.1" height="1.8" fill="#e4e4e4"/><rect x="227.6" y="102.2" width="1.1" height="1.8" fill="#e4e4e4"/><rect x="240.7" y="102.2" width="1.1" height="1.8" fill="#e4e4e4"/><rect x="253.8" y="102.2" width="1.1" height="1.8" fill="#e4e4e4"/><rect x="266.9" y="102.2" width="1.1" height="1.8" fill="#e4e4e4"/><rect x="279.9" y="98" width="1.2" height="6.4" fill="#e4e4e4"/><rect x="293.0" y="102.2" width="1.1" height="1.8" fill="#e4e4e4"/><rect x="306.1" y="102.2" width="1.1" height="1.8" fill="#e4e4e4"/><rect x="319.2" y="102.2" width="1.1" height="1.8" fill="#e4e4e4"/><rect x="332.3" y="102.2" width="1.1" height="1.8" fill="#e4e4e4"/><rect x="345.4" y="102.2" width="1.1" height="1.8" fill="#e4e4e4"/><rect x="358.5" y="102.2" width="1.1" height="1.8" fill="#e4e4e4"/><rect x="371.6" y="102.2" width="1.1" height="1.8" fill="#e4e4e4"/><rect x="384.7" y="102.2" width="1.1" height="1.8" fill="#e4e4e4"/><rect x="397.8" y="102.2" width="1.1" height="1.8" fill="#e4e4e4"/><rect x="410.8" y="98" width="1.2" height="6.4" fill="#e4e4e4"/><rect x="423.9" y="102.2" width="1.1" height="1.8" fill="#e4e4e4"/><rect x="437.0" y="102.2" width="1.1" height="1.8" fill="#e4e4e4"/><rect x="450.1" y="102.2" width="1.1" height="1.8" fill="#e4e4e4"/><rect x="463.2" y="102.2" width="1.1" height="1.8" fill="#e4e4e4"/><rect x="476.3" y="102.2" width="1.1" height="1.8" fill="#e4e4e4"/><rect x="489.4" y="102.2" width="1.1" height="1.8" fill="#e4e4e4"/><rect x="502.5" y="102.2" width="1.1" height="1.8" fill="#e4e4e4"/><rect x="515.6" y="102.2" width="1.1" height="1.8" fill="#e4e4e4"/><rect x="528.7" y="102.2" width="1.1" height="1.8" fill="#e4e4e4"/><rect x="541.7" y="98" width="1.2" height="6.4" fill="#e4e4e4"/><rect x="554.8" y="102.2" width="1.1" height="1.8" fill="#e4e4e4"/><rect x="567.9" y="102.2" width="1.1" height="1.8" fill="#e4e4e4"/><rect x="581.0" y="102.2" width="1.1" height="1.8" fill="#e4e4e4"/><rect x="594.1" y="102.2" width="1.1" height="1.8" fill="#e4e4e4"/><rect x="607.2" y="102.2" width="1.1" height="1.8" fill="#e4e4e4"/><rect x="620.3" y="102.2" width="1.1" height="1.8" fill="#e4e4e4"/><rect x="633.4" y="102.2" width="1.1" height="1.8" fill="#e4e4e4"/><rect x="646.5" y="102.2" width="1.1" height="1.8" fill="#e4e4e4"/><rect x="659.6" y="102.2" width="1.1" height="1.8" fill="#e4e4e4"/><rect x="672.6" y="98" width="1.2" height="6.4" fill="#e4e4e4"/><rect x="685.7" y="102.2" width="1.1" height="1.8" fill="#e4e4e4"/><rect x="698.8" y="102.2" width="1.1" height="1.8" fill="#e4e4e4"/><rect x="711.9" y="102.2" width="1.1" height="1.8" fill="#e4e4e4"/><rect x="725.0" y="102.2" width="1.1" height="1.8" fill="#e4e4e4"/><rect x="738.1" y="102.2" width="1.1" height="1.8" fill="#e4e4e4"/><rect x="751.2" y="102.2" width="1.1" height="1.8" fill="#e4e4e4"/><rect x="764.3" y="102.2" width="1.1" height="1.8" fill="#e4e4e4"/><rect x="777.4" y="102.2" width="1.1" height="1.8" fill="#e4e4e4"/><rect x="790.5" y="102.2" width="1.1" height="1.8" fill="#e4e4e4"/><rect x="803.5" y="98" width="1.2" height="6.4" fill="#e4e4e4"/><rect x="816.6" y="102.2" width="1.1" height="1.8" fill="#e4e4e4"/><rect x="829.7" y="102.2" width="1.1" height="1.8" fill="#e4e4e4"/><rect x="842.8" y="102.2" width="1.1" height="1.8" fill="#e4e4e4"/><rect x="855.9" y="102.2" width="1.1" height="1.8" fill="#e4e4e4"/><rect x="869.0" y="102.2" width="1.1" height="1.8" fill="#e4e4e4"/><rect x="882.1" y="102.2" width="1.1" height="1.8" fill="#e4e4e4"/><rect x="895.2" y="102.2" width="1.1" height="1.8" fill="#e4e4e4"/><rect x="908.3" y="102.2" width="1.1" height="1.8" fill="#e4e4e4"/><rect x="921.4" y="102.2" width="1.1" height="1.8" fill="#e4e4e4"/><rect x="934.4" y="98" width="1.2" height="6.4" fill="#e4e4e4"/><rect x="947.5" y="102.2" width="1.1" height="1.8" fill="#e4e4e4"/><rect x="960.6" y="102.2" width="1.1" height="1.8" fill="#e4e4e4"/><rect x="973.7" y="102.2" width="1.1" height="1.8" fill="#e4e4e4"/><rect x="986.8" y="102.2" width="1.1" height="1.8" fill="#e4e4e4"/><rect x="999.9" y="102.2" width="1.1" height="1.8" fill="#e4e4e4"/><rect x="1013.0" y="102.2" width="1.1" height="1.8" fill="#e4e4e4"/><rect x="1026.1" y="102.2" width="1.1" height="1.8" fill="#e4e4e4"/><rect x="1039.2" y="102.2" width="1.1" height="1.8" fill="#e4e4e4"/><rect x="1052.3" y="102.2" width="1.1" height="1.8" fill="#e4e4e4"/><rect x="1065.3" y="98" width="1.2" height="6.4" fill="#e4e4e4"/><rect x="1078.4" y="102.2" width="1.1" height="1.8" fill="#e4e4e4"/><rect x="1091.5" y="102.2" width="1.1" height="1.8" fill="#e4e4e4"/><rect x="1104.6" y="102.2" width="1.1" height="1.8" fill="#e4e4e4"/><rect x="1117.7" y="102.2" width="1.1" height="1.8" fill="#e4e4e4"/><rect x="1130.8" y="102.2" width="1.1" height="1.8" fill="#e4e4e4"/><rect x="1143.9" y="102.2" width="1.1" height="1.8" fill="#e4e4e4"/><rect x="1157.0" y="102.2" width="1.1" height="1.8" fill="#e4e4e4"/><rect x="1170.1" y="102.2" width="1.1" height="1.8" fill="#e4e4e4"/><rect x="1183.2" y="102.2" width="1.1" height="1.8" fill="#e4e4e4"/><rect x="1196.2" y="98" width="1.2" height="6.4" fill="#e4e4e4"/><rect x="1209.3" y="102.2" width="1.1" height="1.8" fill="#e4e4e4"/><rect x="1222.4" y="102.2" width="1.1" height="1.8" fill="#e4e4e4"/><rect x="1235.5" y="102.2" width="1.1" height="1.8" fill="#e4e4e4"/><rect x="1248.6" y="102.2" width="1.1" height="1.8" fill="#e4e4e4"/><rect x="1261.7" y="102.2" width="1.1" height="1.8" fill="#e4e4e4"/><rect x="1274.8" y="102.2" width="1.1" height="1.8" fill="#e4e4e4"/><rect x="1287.9" y="102.2" width="1.1" height="1.8" fill="#e4e4e4"/><rect x="1301.0" y="102.2" width="1.1" height="1.8" fill="#e4e4e4"/><rect x="1314.1" y="102.2" width="1.1" height="1.8" fill="#e4e4e4"/><rect x="1327.1" y="98" width="1.2" height="6.4" fill="#e4e4e4"/><rect x="1340.2" y="102.2" width="1.1" height="1.8" fill="#e4e4e4"/><rect x="1353.3" y="102.2" width="1.1" height="1.8" fill="#e4e4e4"/><rect x="1366.4" y="102.2" width="1.1" height="1.8" fill="#e4e4e4"/><rect x="1379.5" y="102.2" width="1.1" height="1.8" fill="#e4e4e4"/><rect x="1392.6" y="102.2" width="1.1" height="1.8" fill="#e4e4e4"/><rect x="1405.7" y="102.2" width="1.1" height="1.8" fill="#e4e4e4"/><rect x="1418.8" y="102.2" width="1.1" height="1.8" fill="#e4e4e4"/><rect x="1431.9" y="102.2" width="1.1" height="1.8" fill="#e4e4e4"/><rect x="1445.0" y="102.2" width="1.1" height="1.8" fill="#e4e4e4"/><rect x="1458.0" y="98" width="1.2" height="6.4" fill="#e4e4e4"/><rect x="1471.1" y="102.2" width="1.1" height="1.8" fill="#e4e4e4"/><rect x="1484.2" y="102.2" width="1.1" height="1.8" fill="#e4e4e4"/><rect x="1497.3" y="102.2" width="1.1" height="1.8" fill="#e4e4e4"/><rect x="1510.4" y="102.2" width="1.1" height="1.8" fill="#e4e4e4"/><rect x="1523.5" y="102.2" width="1.1" height="1.8" fill="#e4e4e4"/><rect x="1536.6" y="102.2" width="1.1" height="1.8" fill="#e4e4e4"/><rect x="1549.7" y="102.2" width="1.1" height="1.8" fill="#e4e4e4"/><rect x="1562.8" y="102.2" width="1.1" height="1.8" fill="#e4e4e4"/><rect x="1575.9" y="102.2" width="1.1" height="1.8" fill="#e4e4e4"/><rect x="1588.9" y="98" width="1.2" height="6.4" fill="#e4e4e4"/><rect x="1602.0" y="102.2" width="1.1" height="1.8" fill="#e4e4e4"/><rect x="1615.1" y="102.2" width="1.1" height="1.8" fill="#e4e4e4"/><rect x="1628.2" y="102.2" width="1.1" height="1.8" fill="#e4e4e4"/><rect x="1641.3" y="102.2" width="1.1" height="1.8" fill="#e4e4e4"/><rect x="182.2" y="113.9" width="1.8" height="1.1" fill="#e4e4e4"/><rect x="182.2" y="127.0" width="1.8" height="1.1" fill="#e4e4e4"/><rect x="182.2" y="140.1" width="1.8" height="1.1" fill="#e4e4e4"/><rect x="178" y="153.1" width="6.4" height="1.2" fill="#e4e4e4"/><rect x="182.2" y="166.2" width="1.8" height="1.1" fill="#e4e4e4"/><rect x="182.2" y="179.3" width="1.8" height="1.1" fill="#e4e4e4"/><rect x="182.2" y="192.4" width="1.8" height="1.1" fill="#e4e4e4"/><rect x="182.2" y="205.5" width="1.8" height="1.1" fill="#e4e4e4"/><rect x="182.2" y="218.6" width="1.8" height="1.1" fill="#e4e4e4"/><rect x="182.2" y="231.7" width="1.8" height="1.1" fill="#e4e4e4"/><rect x="182.2" y="244.8" width="1.8" height="1.1" fill="#e4e4e4"/><rect x="182.2" y="257.9" width="1.8" height="1.1" fill="#e4e4e4"/><rect x="182.2" y="271.0" width="1.8" height="1.1" fill="#e4e4e4"/><rect x="178" y="284.0" width="6.4" height="1.2" fill="#e4e4e4"/><rect x="182.2" y="297.1" width="1.8" height="1.1" fill="#e4e4e4"/><rect x="182.2" y="310.2" width="1.8" height="1.1" fill="#e4e4e4"/><rect x="182.2" y="323.3" width="1.8" height="1.1" fill="#e4e4e4"/><rect x="182.2" y="336.4" width="1.8" height="1.1" fill="#e4e4e4"/><rect x="182.2" y="349.5" width="1.8" height="1.1" fill="#e4e4e4"/><rect x="182.2" y="362.6" width="1.8" height="1.1" fill="#e4e4e4"/><rect x="182.2" y="375.7" width="1.8" height="1.1" fill="#e4e4e4"/><rect x="182.2" y="388.8" width="1.8" height="1.1" fill="#e4e4e4"/><rect x="182.2" y="401.9" width="1.8" height="1.1" fill="#e4e4e4"/><rect x="178" y="414.9" width="6.4" height="1.2" fill="#e4e4e4"/><rect x="182.2" y="428.0" width="1.8" height="1.1" fill="#e4e4e4"/><rect x="182.2" y="441.1" width="1.8" height="1.1" fill="#e4e4e4"/><rect x="182.2" y="454.2" width="1.8" height="1.1" fill="#e4e4e4"/><rect x="182.2" y="467.3" width="1.8" height="1.1" fill="#e4e4e4"/><rect x="182.2" y="480.4" width="1.8" height="1.1" fill="#e4e4e4"/><rect x="182.2" y="493.5" width="1.8" height="1.1" fill="#e4e4e4"/><rect x="182.2" y="506.6" width="1.8" height="1.1" fill="#e4e4e4"/><rect x="182.2" y="519.7" width="1.8" height="1.1" fill="#e4e4e4"/><rect x="182.2" y="532.8" width="1.8" height="1.1" fill="#e4e4e4"/><rect x="178" y="545.8" width="6.4" height="1.2" fill="#e4e4e4"/><rect x="182.2" y="558.9" width="1.8" height="1.1" fill="#e4e4e4"/><rect x="182.2" y="572.0" width="1.8" height="1.1" fill="#e4e4e4"/><rect x="182.2" y="585.1" width="1.8" height="1.1" fill="#e4e4e4"/><rect x="182.2" y="598.2" width="1.8" height="1.1" fill="#e4e4e4"/><rect x="182.2" y="611.3" width="1.8" height="1.1" fill="#e4e4e4"/><rect x="182.2" y="624.4" width="1.8" height="1.1" fill="#e4e4e4"/><rect x="182.2" y="637.5" width="1.8" height="1.1" fill="#e4e4e4"/><rect x="182.2" y="650.6" width="1.8" height="1.1" fill="#e4e4e4"/><rect x="182.2" y="663.7" width="1.8" height="1.1" fill="#e4e4e4"/><rect x="178" y="676.7" width="6.4" height="1.2" fill="#e4e4e4"/><rect x="182.2" y="689.8" width="1.8" height="1.1" fill="#e4e4e4"/><rect x="182.2" y="702.9" width="1.8" height="1.1" fill="#e4e4e4"/><rect x="182.2" y="716.0" width="1.8" height="1.1" fill="#e4e4e4"/><rect x="182.2" y="729.1" width="1.8" height="1.1" fill="#e4e4e4"/><rect x="182.2" y="742.2" width="1.8" height="1.1" fill="#e4e4e4"/><rect x="182.2" y="755.3" width="1.8" height="1.1" fill="#e4e4e4"/><rect x="182.2" y="768.4" width="1.8" height="1.1" fill="#e4e4e4"/><rect x="182.2" y="781.5" width="1.8" height="1.1" fill="#e4e4e4"/><rect x="182.2" y="794.6" width="1.8" height="1.1" fill="#e4e4e4"/><rect x="178" y="807.6" width="6.4" height="1.2" fill="#e4e4e4"/><rect x="182.2" y="820.7" width="1.8" height="1.1" fill="#e4e4e4"/><rect x="182.2" y="833.8" width="1.8" height="1.1" fill="#e4e4e4"/><rect x="182.2" y="846.9" width="1.8" height="1.1" fill="#e4e4e4"/><rect x="182.2" y="860.0" width="1.8" height="1.1" fill="#e4e4e4"/><rect x="182.2" y="873.1" width="1.8" height="1.1" fill="#e4e4e4"/><rect x="182.2" y="886.2" width="1.8" height="1.1" fill="#e4e4e4"/><rect x="182.2" y="899.3" width="1.8" height="1.1" fill="#e4e4e4"/><rect x="182.2" y="912.4" width="1.8" height="1.1" fill="#e4e4e4"/><rect x="182.2" y="925.5" width="1.8" height="1.1" fill="#e4e4e4"/><rect x="178" y="938.5" width="6.4" height="1.2" fill="#e4e4e4"/><rect x="1506.6" y="84.5" width="1.1" height="20" fill="#e8e8e8"/><rect x="164" y="664.6" width="20.4" height="1.1" fill="#e8e8e8"/></svg>
<div class="t" style="left:268.3px;top:82px;font-size:11px;line-height:12px;height:12px;color:#d8d8d8;">-500</div>
<div class="t" style="left:399.2px;top:82px;font-size:11px;line-height:12px;height:12px;color:#d8d8d8;">-400</div>
<div class="t" style="left:530.1px;top:82px;font-size:11px;line-height:12px;height:12px;color:#d8d8d8;">-300</div>
<div class="t" style="left:661.0px;top:82px;font-size:11px;line-height:12px;height:12px;color:#d8d8d8;">-200</div>
<div class="t" style="left:791.9px;top:82px;font-size:11px;line-height:12px;height:12px;color:#d8d8d8;">-100</div>
<div class="t" style="left:931.9px;top:82px;font-size:11px;line-height:12px;height:12px;color:#d8d8d8;">0</div>
<div class="t" style="left:1056.7px;top:82px;font-size:11px;line-height:12px;height:12px;color:#d8d8d8;">100</div>
<div class="t" style="left:1187.6px;top:82px;font-size:11px;line-height:12px;height:12px;color:#d8d8d8;">200</div>
<div class="t" style="left:1318.5px;top:82px;font-size:11px;line-height:12px;height:12px;color:#d8d8d8;">300</div>
<div class="t" style="left:1449.4px;top:82px;font-size:11px;line-height:12px;height:12px;color:#d8d8d8;">400</div>
<div class="t" style="left:1580.3px;top:82px;font-size:11px;line-height:12px;height:12px;color:#d8d8d8;">500</div>
<div class="t" style="left:164.0px;top:152px;font-size:11px;line-height:12px;height:12px;letter-spacing:-0.40px;color:#d8d8d8;">-400</div>
<div class="t" style="left:164.0px;top:283px;font-size:11px;line-height:12px;height:12px;letter-spacing:-0.40px;color:#d8d8d8;">-300</div>
<div class="t" style="left:164.0px;top:413px;font-size:11px;line-height:12px;height:12px;letter-spacing:-0.40px;color:#d8d8d8;">-200</div>
<div class="t" style="left:164.0px;top:544px;font-size:11px;line-height:12px;height:12px;letter-spacing:-0.40px;color:#d8d8d8;">-100</div>
<div class="t" style="left:171.1px;top:675px;font-size:11px;line-height:12px;height:12px;color:#d8d8d8;">0</div>
<div class="t" style="left:164.9px;top:806px;font-size:11px;line-height:12px;height:12px;letter-spacing:0.05px;color:#d8d8d8;">100</div>
<div class="t" style="left:164.9px;top:937px;font-size:11px;line-height:12px;height:12px;letter-spacing:0.05px;color:#d8d8d8;">200</div>
<div class="a" style="left:935px;top:106px;width:1px;height:841px;background:#2a2a2a;"></div>
<div class="a" style="left:186px;top:677px;width:1468.5px;height:1px;background:#2a2a2a;"></div>
<div class="a" style="left:1654px;top:106px;width:9.5px;height:841px;background:linear-gradient(90deg,#232323,#2f2f2f 40%,#484848);"></div>
<div class="a" style="left:1663.5px;top:106px;width:2px;height:850px;background:#3a3a3a;"></div>
<div class="a" style="left:186px;top:947.5px;width:1468.5px;height:9px;background:linear-gradient(#1f1f1f,#2c2c2c 40%,#474747);"></div>
<div class="a" style="left:186px;top:956.5px;width:1480px;height:1.5px;background:#2c2c2c;"></div>
<svg class="a" style="left:1655px;top:107px" width="9" height="15" viewBox="0 0 9 15"><rect x=".5" y=".5" width="8" height="14" rx="2.2" fill="#f59b24" stroke="#a66a1c" stroke-width=".6"/><rect x="3" y="6" width="3" height="3" fill="#111"/><rect x="4" y="7" width="1" height="1" fill="#fff"/></svg>
<svg class="a" style="left:1655px;top:932px" width="9" height="15" viewBox="0 0 9 15"><rect x=".5" y=".5" width="8" height="14" rx="2.2" fill="#f59b24" stroke="#a66a1c" stroke-width=".6"/><rect x="3" y="6" width="3" height="3" fill="#111"/><rect x="4" y="7" width="1" height="1" fill="#fff"/></svg>
<div class="a" style="left:1655px;top:516px;width:8.5px;height:20.5px;background:#f59b24;border-radius:2px"></div>
<svg class="a" style="left:186.5px;top:948px" width="15" height="9" viewBox="0 0 15 9"><rect x=".5" y=".5" width="14" height="8" rx="2.2" fill="#f59b24" stroke="#a66a1c" stroke-width=".6"/><rect x="6" y="3" width="3" height="3" fill="#111"/><rect x="7" y="4" width="1" height="1" fill="#fff"/></svg>
<svg class="a" style="left:1638.5px;top:948px" width="15" height="9" viewBox="0 0 15 9"><rect x=".5" y=".5" width="14" height="8" rx="2.2" fill="#f59b24" stroke="#a66a1c" stroke-width=".6"/><rect x="6" y="3" width="3" height="3" fill="#111"/><rect x="7" y="4" width="1" height="1" fill="#fff"/></svg>
<div class="a" style="left:916px;top:948px;width:8px;height:8.5px;background:#f59b24;border-radius:2px"></div>
<div class="a" style="left:1667px;top:84px;width:4px;height:876px;background:linear-gradient(#131313,#191919 42%,#292929 80%,#2e2e2e);"></div>
<div class="a" style="left:1666px;top:84px;width:1px;height:876px;background:#454545;"></div>
<div class="a" style="left:1671.5px;top:84px;width:1px;height:876px;background:#3f3f3f;"></div>
<div class="a" style="left:1672px;top:83px;width:248px;height:880px;background:#323232;"></div>
<div class="a" style="left:1672px;top:84px;width:248px;height:16px;background:linear-gradient(#2d2d2d,#222 40%,#2a2a2a 75%,#343434);"></div>
<div class="t" style="left:1777.8px;top:86px;font-size:11px;line-height:12px;height:12px;letter-spacing:0.04px;color:#d0d0d0;">Palette</div>
<svg class="a" style="left:1909px;top:88px" width="8" height="8"><use href="#iX"/></svg>
<div class="t" style="left:1690.5px;top:108px;font-size:11px;line-height:12px;height:12px;letter-spacing:-0.06px;">Alt + Click:</div>
<div class="a" style="left:1744px;top:104px;width:129.5px;height:19.5px;background:#4b4b4b;border:1px solid #252525;border-radius:4px;box-shadow:0 1px 0 #3a3a3a"></div>
<svg class="a" style="left:1748px;top:106px" width="18" height="15" viewBox="0 0 18 15"><path d="M2.6 .6L6.2 .8L16.2 14L2.6 3.4Z" fill="#f5a623"/></svg>
<div class="t" style="left:1768.5px;top:108px;font-size:11px;line-height:12px;height:12px;letter-spacing:-0.05px;">create bone</div>
<div class="a" style="left:1681.5px;top:126.5px;width:229.5px;height:292px;background:transparent;border:1px solid #3e3e3e"></div>
<div class="t" style="left:1686.5px;top:142px;font-size:11px;line-height:12px;height:12px;letter-spacing:0.01px;">Default Pivot:</div>
<div class="a" style="left:1759.5px;top:132.5px;width:39px;height:31px;background:#4b4b4b;border:1px solid #252525;border-radius:6px;box-shadow:0 1px 0 #3a3a3a"></div>
<div class="a" style="left:1802.5px;top:132.5px;width:39px;height:31px;background:#4b4b4b;border:1px solid #252525;border-radius:6px;box-shadow:0 1px 0 #3a3a3a"></div>
<div class="a" style="left:1865.5px;top:132.5px;width:39px;height:31px;background:#4b4b4b;border:1px solid #252525;border-radius:6px;box-shadow:0 1px 0 #3a3a3a"></div>
<svg class="a" style="left:1770.5px;top:139.5px" width="16" height="16"><use href="#iCopy"/></svg>
<svg class="a" style="left:1813px;top:139.5px" width="16" height="16"><use href="#iPaste"/></svg>
<svg class="a" style="left:1877px;top:139.5px" width="17" height="17" viewBox="0 0 17 17"><path d="M2 7.2a6 4.6 0 0 1 10-3.4l1.6-1.6.6 5.6-5.6-.4 1.6-1.8a3.6 2.6 0 0 0-5.6 1.6z" fill="#62c862"/><g transform="translate(17,16.4) scale(-1,-1)"><path d="M2 7.2a6 4.6 0 0 1 10-3.4l1.6-1.6.6 5.6-5.6-.4 1.6-1.8a3.6 2.6 0 0 0-5.6 1.6z" fill="#62c862"/></g></svg>
<div class="a" style="left:1684px;top:171px;width:213.5px;height:17.5px;background:linear-gradient(#606060,#4c4c4c 50%,#3a3a3a);border:1px solid #6a6a6a;border-bottom-color:#2c2c2c"></div>
<div class="t" style="left:1707.5px;top:173px;font-size:12px;line-height:14px;height:14px;letter-spacing:-0.13px;color:#f4f4f4;">Name</div>
<div class="t" style="left:1754.5px;top:173px;font-size:12px;line-height:14px;height:14px;letter-spacing:-0.14px;color:#f4f4f4;">(Project Folder)</div>
<svg class="a" style="left:1880.5px;top:174.5px" width="10" height="8" viewBox="0 0 10 8"><path d="M1 6L5 2L9 6" fill="none" stroke="#c6c6c6" stroke-width="2"/></svg>
<div class="a" style="left:1684px;top:188.5px;width:213.5px;height:201px;background:#4d4d4d;"></div>
<div class="t" style="left:1729.8px;top:191px;font-size:12px;line-height:14px;height:14px;letter-spacing:-0.04px;color:#cdcdcd;">arm_adillo</div>
<svg class="a" style="left:1708px;top:189px" width="13" height="15.6"><use href="#iFolder"/></svg>
<div class="a" style="left:1684px;top:205px;width:213.5px;height:16px;background:#666;"></div>
<div class="t" style="left:1729.8px;top:207px;font-size:12px;line-height:14px;height:14px;letter-spacing:-0.17px;color:#cdcdcd;">arms</div>
<svg class="a" style="left:1708px;top:205px" width="13" height="15.6"><use href="#iFolder"/></svg>
<div class="t" style="left:1729.8px;top:223px;font-size:12px;line-height:14px;height:14px;letter-spacing:-0.62px;color:#cdcdcd;">boss_0</div>
<svg class="a" style="left:1708px;top:221px" width="13" height="15.6"><use href="#iFolder"/></svg>
<div class="a" style="left:1684px;top:237px;width:213.5px;height:16px;background:#666;"></div>
<div class="t" style="left:1729.8px;top:239px;font-size:12px;line-height:14px;height:14px;letter-spacing:-0.29px;color:#cdcdcd;">bunus_0</div>
<svg class="a" style="left:1708px;top:237px" width="13" height="15.6"><use href="#iFolder"/></svg>
<div class="t" style="left:1729.8px;top:255px;font-size:12px;line-height:14px;height:14px;letter-spacing:-0.02px;color:#cdcdcd;">effects</div>
<svg class="a" style="left:1708px;top:253px" width="13" height="15.6"><use href="#iFolder"/></svg>
<div class="a" style="left:1684px;top:269px;width:213.5px;height:16px;background:#666;"></div>
<div class="t" style="left:1729.8px;top:271px;font-size:12px;line-height:14px;height:14px;letter-spacing:-0.34px;color:#cdcdcd;">enemy_0</div>
<svg class="a" style="left:1708px;top:269px" width="13" height="15.6"><use href="#iFolder"/></svg>
<div class="t" style="left:1729.8px;top:287px;font-size:12px;line-height:14px;height:14px;letter-spacing:-0.00px;color:#cdcdcd;">feet</div>
<svg class="a" style="left:1708px;top:285px" width="13" height="15.6"><use href="#iFolder"/></svg>
<div class="a" style="left:1684px;top:301px;width:213.5px;height:16px;background:#666;"></div>
<div class="t" style="left:1729.8px;top:303px;font-size:12px;line-height:14px;height:14px;letter-spacing:0.13px;color:#cdcdcd;">ghost</div>
<svg class="a" style="left:1708px;top:301px" width="13" height="15.6"><use href="#iFolder"/></svg>
<div class="t" style="left:1729.8px;top:319px;font-size:12px;line-height:14px;height:14px;letter-spacing:-0.01px;color:#cdcdcd;">guns</div>
<svg class="a" style="left:1708px;top:317px" width="13" height="15.6"><use href="#iFolder"/></svg>
<div class="a" style="left:1684px;top:333px;width:213.5px;height:16px;background:#666;"></div>
<div class="t" style="left:1729.8px;top:335px;font-size:12px;line-height:14px;height:14px;letter-spacing:-0.14px;color:#cdcdcd;">hands</div>
<svg class="a" style="left:1708px;top:333px" width="13" height="15.6"><use href="#iFolder"/></svg>
<div class="t" style="left:1729.8px;top:351px;font-size:12px;line-height:14px;height:14px;letter-spacing:-0.17px;color:#cdcdcd;">head</div>
<svg class="a" style="left:1708px;top:349px" width="13" height="15.6"><use href="#iFolder"/></svg>
<div class="a" style="left:1684px;top:365px;width:213.5px;height:16px;background:#666;"></div>
<div class="t" style="left:1729.8px;top:367px;font-size:12px;line-height:14px;height:14px;letter-spacing:0.11px;color:#cdcdcd;">hopper</div>
<svg class="a" style="left:1708px;top:365px" width="13" height="15.6"><use href="#iFolder"/></svg>
<svg class="a" style="left:1708px;top:381px" width="13" height="8" viewBox="0 0 13 8.2"><use href="#iFolder" width="13" height="16"/></svg>
<div class="a" style="left:1731px;top:386px;width:1.5px;height:3.5px;background:#d6d6d6;"></div>
<svg class="a" style="left:1684px;top:189px" width="24" height="200.5" viewBox="0 0 24 200.5"><rect x="6.5" y="4.5" width="8" height="8" fill="none" stroke="#c4c4c4" stroke-width="1"/><path d="M8.5 8.5h4M10.5 6.5v4" stroke="#e8e8e8" stroke-width="1"/><path d="M16 8.5h5" stroke="#aaa" stroke-width="1" stroke-dasharray="1 1"/><rect x="6.5" y="20.5" width="8" height="8" fill="none" stroke="#c4c4c4" stroke-width="1"/><path d="M8.5 24.5h4M10.5 22.5v4" stroke="#e8e8e8" stroke-width="1"/><path d="M16 24.5h5" stroke="#aaa" stroke-width="1" stroke-dasharray="1 1"/><rect x="6.5" y="36.5" width="8" height="8" fill="none" stroke="#c4c4c4" stroke-width="1"/><path d="M8.5 40.5h4M10.5 38.5v4" stroke="#e8e8e8" stroke-width="1"/><path d="M16 40.5h5" stroke="#aaa" stroke-width="1" stroke-dasharray="1 1"/><rect x="6.5" y="52.5" width="8" height="8" fill="none" stroke="#c4c4c4" stroke-width="1"/><path d="M8.5 56.5h4M10.5 54.5v4" stroke="#e8e8e8" stroke-width="1"/><path d="M16 56.5h5" stroke="#aaa" stroke-width="1" stroke-dasharray="1 1"/><rect x="6.5" y="68.5" width="8" height="8" fill="none" stroke="#c4c4c4" stroke-width="1"/><path d="M8.5 72.5h4M10.5 70.5v4" stroke="#e8e8e8" stroke-width="1"/><path d="M16 72.5h5" stroke="#aaa" stroke-width="1" stroke-dasharray="1 1"/><rect x="6.5" y="84.5" width="8" height="8" fill="none" stroke="#c4c4c4" stroke-width="1"/><path d="M8.5 88.5h4M10.5 86.5v4" stroke="#e8e8e8" stroke-width="1"/><path d="M16 88.5h5" stroke="#aaa" stroke-width="1" stroke-dasharray="1 1"/><rect x="6.5" y="100.5" width="8" height="8" fill="none" stroke="#c4c4c4" stroke-width="1"/><path d="M8.5 104.5h4M10.5 102.5v4" stroke="#e8e8e8" stroke-width="1"/><path d="M16 104.5h5" stroke="#aaa" stroke-width="1" stroke-dasharray="1 1"/><rect x="6.5" y="116.5" width="8" height="8" fill="none" stroke="#c4c4c4" stroke-width="1"/><path d="M8.5 120.5h4M10.5 118.5v4" stroke="#e8e8e8" stroke-width="1"/><path d="M16 120.5h5" stroke="#aaa" stroke-width="1" stroke-dasharray="1 1"/><rect x="6.5" y="132.5" width="8" height="8" fill="none" stroke="#c4c4c4" stroke-width="1"/><path d="M8.5 136.5h4M10.5 134.5v4" stroke="#e8e8e8" stroke-width="1"/><path d="M16 136.5h5" stroke="#aaa" stroke-width="1" stroke-dasharray="1 1"/><rect x="6.5" y="148.5" width="8" height="8" fill="none" stroke="#c4c4c4" stroke-width="1"/><path d="M8.5 152.5h4M10.5 150.5v4" stroke="#e8e8e8" stroke-width="1"/><path d="M16 152.5h5" stroke="#aaa" stroke-width="1" stroke-dasharray="1 1"/><rect x="6.5" y="164.5" width="8" height="8" fill="none" stroke="#c4c4c4" stroke-width="1"/><path d="M8.5 168.5h4M10.5 166.5v4" stroke="#e8e8e8" stroke-width="1"/><path d="M16 168.5h5" stroke="#aaa" stroke-width="1" stroke-dasharray="1 1"/><rect x="6.5" y="180.5" width="8" height="8" fill="none" stroke="#c4c4c4" stroke-width="1"/><path d="M8.5 184.5h4M10.5 182.5v4" stroke="#e8e8e8" stroke-width="1"/><path d="M16 184.5h5" stroke="#aaa" stroke-width="1" stroke-dasharray="1 1"/><path d="M6.5 201v-4.5h8v4.5" fill="none" stroke="#c4c4c4" stroke-width="1"/><path d="M10.5 0v200" stroke="#aaa" stroke-width="1" stroke-dasharray="1 1" opacity=".8"/></svg>
<div class="a" style="left:1898px;top:171.5px;width:10px;height:217.5px;background:linear-gradient(90deg,#222,#2e2e2e 40%,#454545);"></div>
<svg class="a" style="left:1898.5px;top:172px" width="9.5" height="15" viewBox="0 0 9.5 15"><rect x=".5" y=".5" width="8.5" height="14" rx="2.2" fill="#f59b24" stroke="#a66a1c" stroke-width=".6"/><rect x="3.25" y="6" width="3" height="3" fill="#111"/><rect x="4.25" y="7" width="1" height="1" fill="#fff"/></svg>
<svg class="a" style="left:1898.5px;top:372.5px" width="9.5" height="15" viewBox="0 0 9.5 15"><rect x=".5" y=".5" width="8.5" height="14" rx="2.2" fill="#f59b24" stroke="#a66a1c" stroke-width=".6"/><rect x="3.25" y="6" width="3" height="3" fill="#111"/><rect x="4.25" y="7" width="1" height="1" fill="#fff"/></svg>
<div class="a" style="left:1899px;top:188px;width:8.5px;height:58px;background:#f59b24;border-radius:2px"></div>
<div class="t" style="left:1681.5px;top:398px;font-size:11px;line-height:12px;height:12px;letter-spacing:-0.18px;">Drag new items as</div>
<div class="a" style="left:1775.5px;top:396px;width:133.5px;height:16.5px;background:#4b4b4b;border:1px solid #252525;border-radius:4px;box-shadow:0 1px 0 #3a3a3a"></div>
<div class="t" style="left:1779.5px;top:398px;font-size:11px;line-height:12px;height:12px;letter-spacing:-0.06px;">sprites</div>
<div class="a" style="left:1723.5px;top:419.5px;width:58px;height:18.5px;background:linear-gradient(#393939,#262626);border:1px solid #3c3c3c;border-top-color:#2c2c2c;border-radius:0 0 3px 3px"></div>
<div class="a" style="left:1681.5px;top:418.5px;width:42.5px;height:23px;background:#333;border:1px solid #444;border-top:none;border-radius:0 0 3px 3px"></div>
<div class="t" style="left:1691.0px;top:425px;font-size:11px;line-height:12px;height:12px;letter-spacing:-0.34px;color:#d0d0d0;">Files</div>
<div class="t" style="left:1733.5px;top:424px;font-size:11px;line-height:12px;height:12px;letter-spacing:-0.04px;color:#d0d0d0;">Objects</div>
<div class="a" style="left:1673px;top:451px;width:247px;height:4.5px;background:#171717;border:1px solid #3d3d3d;border-right:none"></div>
<div class="a" style="left:1672px;top:456px;width:248px;height:16px;background:linear-gradient(#2d2d2d,#222 40%,#2a2a2a 75%,#343434);"></div>
<div class="t" style="left:1769.8px;top:458px;font-size:11px;line-height:12px;height:12px;letter-spacing:-0.29px;color:#d0d0d0;">Animations</div>
<svg class="a" style="left:1909px;top:460px" width="8" height="8"><use href="#iX"/></svg>
<div class="a" style="left:1677.5px;top:474.5px;width:28.5px;height:26.5px;background:#2f2f2f;border:1px solid #262626;border-radius:4px"></div>
<div class="a" style="left:1677.5px;top:477.5px;width:1px;height:20.5px;background:#8c8c8c;"></div>
<div class="a" style="left:1680.5px;top:501.8px;width:22.5px;height:1px;background:#8c8c8c;"></div>
<div class="a" style="left:1712px;top:474.5px;width:28.5px;height:26.5px;background:#2f2f2f;border:1px solid #262626;border-radius:4px"></div>
<div class="a" style="left:1712px;top:477.5px;width:1px;height:20.5px;background:#8c8c8c;"></div>
<div class="a" style="left:1715px;top:501.8px;width:22.5px;height:1px;background:#8c8c8c;"></div>
<div class="a" style="left:1747px;top:474.5px;width:28.5px;height:26.5px;background:#2f2f2f;border:1px solid #262626;border-radius:4px"></div>
<div class="a" style="left:1747px;top:477.5px;width:1px;height:20.5px;background:#8c8c8c;"></div>
<div class="a" style="left:1750px;top:501.8px;width:22.5px;height:1px;background:#8c8c8c;"></div>
<div class="a" style="left:1782px;top:474.5px;width:28.5px;height:26.5px;background:#2f2f2f;border:1px solid #262626;border-radius:4px"></div>
<div class="a" style="left:1782px;top:477.5px;width:1px;height:20.5px;background:#8c8c8c;"></div>
<div class="a" style="left:1785px;top:501.8px;width:22.5px;height:1px;background:#8c8c8c;"></div>
<svg class="a" style="left:1684px;top:481px" width="14.5" height="14.5"><use href="#iDel"/></svg>
<svg class="a" style="left:1718px;top:480px" width="17" height="17" viewBox="0 0 17 17"><circle cx="7.6" cy="2.6" r="2.2" fill="#f3b52a"/><path d="M2 6.4h11.4M8 5.4L5.6 11.4L2.6 15.6M6 10.6l3.4 1.4" fill="none" stroke="#f3b52a" stroke-width="1.7"/><circle cx="12" cy="12" r="3.6" fill="#3fae3f" stroke="#d4f0d4" stroke-width=".7"/><path d="M10 12h4M12 10v4" stroke="#fff" stroke-width="1.2"/></svg>
<svg class="a" style="left:1755px;top:480px" width="16" height="17" viewBox="0 0 16 17"><rect x=".5" y=".5" width="10" height="13.6" fill="#3a3a3a"/><path d="M1.3 1.6v12M9.7 1.6v12" stroke="#999" stroke-width="1" stroke-dasharray="1 1.2"/><rect x="2.6" y="1.4" width="5.8" height="5.4" fill="#58b8ee"/><path d="M2.6 6.8l2-2.4 1.6 1.4 2.2-1.6v2.6z" fill="#4caf3c"/><rect x="2.6" y="7.8" width="5.8" height="5.4" fill="#58b8ee"/><path d="M2.6 13.2l2-2.4 1.6 1.4 2.2-1.6v2.6z" fill="#4caf3c"/><circle cx="11.6" cy="12.6" r="3.6" fill="#3fae3f" stroke="#d4f0d4" stroke-width=".7"/><path d="M9.6 12.6h4M11.6 10.6v4" stroke="#fff" stroke-width="1.2"/></svg>
<svg class="a" style="left:1788px;top:479px" width="18" height="17" viewBox="0 0 18 17"><path d="M.8 .8h6.6l2.6 2.6v8H.8z" fill="url(#gPageB)" stroke="#7f9ad0" stroke-width=".6"/><path d="M7 5h6l3 3v8.2H7z" fill="url(#gPage)" stroke="#5f86d8" stroke-width=".9"/><path d="M3.6 6.2h6.2V4.6l3.6 2.9-3.6 2.9V8.8H3.6z" fill="#48a848" stroke="#2f7f2f" stroke-width=".4"/></svg>
<div class="a" style="left:1812.5px;top:480px;width:14px;height:16px;background:#2f2f2f;border:1px solid #262626;border-radius:3px"></div>
<div class="a" style="left:1815px;top:497px;width:9px;height:1px;background:#8c8c8c;"></div>
<div class="t" style="left:1813.5px;top:481px;font-size:12px;line-height:14px;height:14px;">...</div>
<div class="a" style="left:1849.5px;top:478px;width:65.5px;height:20px;background:#4b4b4b;border:1px solid #252525;border-radius:4px;box-shadow:0 1px 0 #3a3a3a"></div>
<div class="t" style="left:1855.5px;top:482px;font-size:12px;line-height:14px;height:14px;letter-spacing:-0.47px;color:#cdcdcd;">Char Maps</div>
<div class="a" style="left:1677.5px;top:508px;width:238.5px;height:420px;background:#4d4d4d;"></div>
<div class="a" style="left:1684.5px;top:512.5px;width:8px;height:8px;background:transparent;border:1px solid #c4c4c4"></div>
<div class="a" style="left:1686.5px;top:516px;width:4px;height:1px;background:#e8e8e8;"></div>
<div class="t" style="left:1702.0px;top:509px;font-size:12px;line-height:14px;height:14px;letter-spacing:-0.34px;color:#f59b24;">entity_000</div>
<div class="a" style="left:1698.5px;top:509px;width:215.5px;height:14.5px;background:transparent;border:1px dotted #2a2a2a;border-radius:2px"></div>
<div class="a" style="left:1718px;top:554.5px;width:196px;height:14.5px;background:#f59b24;"></div>
<div class="t" style="left:1721.0px;top:525px;font-size:12px;line-height:14px;height:14px;letter-spacing:-0.41px;color:#d6d6d6;">2_charge_up</div>
<div class="t" style="left:1721.0px;top:540px;font-size:12px;line-height:14px;height:14px;letter-spacing:-0.22px;color:#d6d6d6;">3_punch</div>
<div class="t" style="left:1721.0px;top:555px;font-size:12px;line-height:14px;height:14px;letter-spacing:-0.17px;color:#1c1208;">4_hurt</div>
<div class="t" style="left:1721.0px;top:570px;font-size:12px;line-height:14px;height:14px;letter-spacing:-0.00px;color:#d6d6d6;">1_idle+fly</div>
<div class="t" style="left:1721.0px;top:585px;font-size:12px;line-height:14px;height:14px;letter-spacing:-0.31px;color:#d6d6d6;">6_hurt2</div>
<div class="t" style="left:1721.0px;top:600px;font-size:12px;line-height:14px;height:14px;letter-spacing:-0.17px;color:#d6d6d6;">die</div>
<div class="t" style="left:1721.0px;top:615px;font-size:12px;line-height:14px;height:14px;letter-spacing:-0.18px;color:#d6d6d6;">5_charge_up2(uppercut)</div>
<div class="t" style="left:1721.0px;top:630px;font-size:12px;line-height:14px;height:14px;letter-spacing:-0.05px;color:#d6d6d6;">7_punch2(uppercut)</div>
<svg class="a" style="left:1677px;top:508px" width="240" height="140" viewBox="0 0 240 140"><path d="M41 15.5h196" stroke="#2a2a2a" stroke-width="1" stroke-dasharray="1 1"/><path d="M41 30.5h196" stroke="#2a2a2a" stroke-width="1" stroke-dasharray="1 1"/><path d="M41 45.5h196" stroke="#2a2a2a" stroke-width="1" stroke-dasharray="1 1"/><path d="M41 60.5h196" stroke="#2a2a2a" stroke-width="1" stroke-dasharray="1 1"/><path d="M41 75.5h196" stroke="#2a2a2a" stroke-width="1" stroke-dasharray="1 1"/><path d="M41 90.5h196" stroke="#2a2a2a" stroke-width="1" stroke-dasharray="1 1"/><path d="M41 105.5h196" stroke="#2a2a2a" stroke-width="1" stroke-dasharray="1 1"/><path d="M41 120.5h196" stroke="#2a2a2a" stroke-width="1" stroke-dasharray="1 1"/><path d="M41 135.5h196" stroke="#2a2a2a" stroke-width="1" stroke-dasharray="1 1"/><path d="M32 23.5h9" stroke="#c8c8c8" stroke-width="1" stroke-dasharray="1 1"/><path d="M32 38.5h9" stroke="#c8c8c8" stroke-width="1" stroke-dasharray="1 1"/><path d="M32 53.5h9" stroke="#c8c8c8" stroke-width="1" stroke-dasharray="1 1"/><path d="M32 68.5h9" stroke="#c8c8c8" stroke-width="1" stroke-dasharray="1 1"/><path d="M32 83.5h9" stroke="#c8c8c8" stroke-width="1" stroke-dasharray="1 1"/><path d="M32 98.5h9" stroke="#c8c8c8" stroke-width="1" stroke-dasharray="1 1"/><path d="M32 113.5h9" stroke="#c8c8c8" stroke-width="1" stroke-dasharray="1 1"/><path d="M32 128.5h9" stroke="#c8c8c8" stroke-width="1" stroke-dasharray="1 1"/><path d="M31.5 16v113" stroke="#c8c8c8" stroke-width="1" stroke-dasharray="1 1"/><path d="M16 8.5h5M11.5 2v2" stroke="#c8c8c8" stroke-width="1" stroke-dasharray="1 1"/></svg>
<div class="a" style="left:1673px;top:933.5px;width:54.5px;height:18px;background:linear-gradient(#393939,#262626);border:1px solid #3c3c3c;border-top-color:#2c2c2c;border-radius:0 0 3px 3px"></div>
<div class="a" style="left:1727px;top:932.5px;width:74px;height:22.5px;background:#333;border:1px solid #444;border-top:none;border-radius:0 0 3px 3px"></div>
<div class="t" style="left:1682.0px;top:938px;font-size:11px;line-height:12px;height:12px;letter-spacing:-0.03px;color:#d0d0d0;">History</div>
<div class="t" style="left:1738.0px;top:939px;font-size:11px;line-height:12px;height:12px;letter-spacing:-0.29px;color:#d0d0d0;">Animations</div>
<div class="a" style="left:0px;top:964px;width:1920px;height:92px;background:#323232;"></div>
<div class="a" style="left:0px;top:959.5px;width:1920px;height:4.5px;background:#1b1b1b;border-top:1px solid #3f3f3f;border-bottom:1px solid #2a2a2a"></div>
<div class="a" style="left:0px;top:965px;width:1920px;height:17px;background:linear-gradient(#2d2d2d,#222 40%,#2a2a2a 75%,#343434);"></div>
<div class="t" style="left:933.2px;top:966px;font-size:15px;line-height:17px;height:17px;letter-spacing:-0.45px;color:#d4d4d4;">Timeline</div>
<svg class="a" style="left:1909px;top:969px" width="8" height="8"><use href="#iX"/></svg>
<div class="a" style="left:1px;top:983.5px;width:138.5px;height:58.5px;background:#323232;border:1px solid #e2e2e2"></div>
<svg class="a" style="left:0;top:1000px;overflow:visible" width="140" height="24" viewBox="0 0 140 24"><rect x="7.75" y="2.75" width="2" height="18.4" fill="#fff"/><path d="M9.75 12L17.75 3.4V20.6Z" fill="#fff"/><path d="M18.4 12L26.4 3.4V20.6Z" fill="#fff"/><path d="M33.9 12L41.9 3.4V20.6Z" fill="#fff"/><path d="M43.1 12L51.1 3.4V20.6Z" fill="#fff"/><path d="M64 -1.4L76 12L64 25.4Z" fill="#fff"/><path d="M97.9 12L89.9 3.4V20.6Z" fill="#fff"/><path d="M107.1 12L99.1 3.4V20.6Z" fill="#fff"/><path d="M120.9 12L112.9 3.4V20.6Z" fill="#fff"/><path d="M129.3 12L121.3 3.4V20.6Z" fill="#fff"/><rect x="129.4" y="2.75" width="2" height="18.4" fill="#fff"/></svg>
<div class="a" style="left:1px;top:1043.5px;width:138.5px;height:10px;background:#2a2a2a;border:1px solid #bdbdbd;border-top:none"></div>
<svg class="a" style="left:1.7px;top:1044px" width="14.5" height="9" viewBox="0 0 14.5 9"><rect x=".5" y=".5" width="13.5" height="8" rx="2.2" fill="#f59b24" stroke="#a66a1c" stroke-width=".6"/><rect x="5.75" y="3" width="3" height="3" fill="#111"/><rect x="6.75" y="4" width="1" height="1" fill="#fff"/></svg>
<svg class="a" style="left:123.5px;top:1044px" width="14.8" height="9" viewBox="0 0 14.8 9"><rect x=".5" y=".5" width="13.8" height="8" rx="2.2" fill="#f59b24" stroke="#a66a1c" stroke-width=".6"/><rect x="5.9" y="3" width="3" height="3" fill="#111"/><rect x="6.9" y="4" width="1" height="1" fill="#fff"/></svg>
<div class="a" style="left:17.3px;top:1044.3px;width:105.4px;height:8.4px;background:linear-gradient(90deg,#f59b24,#f7ad4a 55%,#f59b24);border-radius:2.5px"></div>
<div class="a" style="left:144.8px;top:985.8px;width:26.2px;height:23.5px;background:#4b4b4b;border:1px solid #252525;border-radius:5px;box-shadow:0 1px 0 #3a3a3a"></div>
<div class="a" style="left:173px;top:985.8px;width:19.7px;height:23.5px;background:#4b4b4b;border:1px solid #252525;border-radius:5px;box-shadow:0 1px 0 #3a3a3a"></div>
<svg class="a" style="left:152.5px;top:991px" width="11" height="12" viewBox="0 0 11 12"><path d="M2.2 10.6V5.4a3.3 3.3 0 0 1 6.6 0V10.6" fill="none" stroke="#f01414" stroke-width="2.8"/><rect x=".8" y="9.6" width="2.8" height="1.8" fill="#ccc"/><rect x="7.4" y="9.6" width="2.8" height="1.8" fill="#ccc"/></svg>
<div class="t" style="left:178.0px;top:991px;font-size:12px;line-height:14px;height:14px;">...</div>
<div class="t" style="left:197.5px;top:992px;font-size:11px;line-height:12px;height:12px;letter-spacing:-0.12px;">play speed</div>
<div class="a" style="left:255px;top:995px;width:149.5px;height:5.5px;background:#2b2b2b;border:1px solid #1d1d1d;border-right-color:#8a8a8a;border-bottom-color:#6a6a6a;border-radius:2px"></div>
<div class="a" style="left:255.5px;top:995.5px;width:73px;height:4.5px;background:linear-gradient(#7db5f3,#3d86dc);border-radius:2px"></div>
<div class="a" style="left:328px;top:991.5px;width:23px;height:12px;background:#474747;border-radius:2.5px;border:1px solid #3a3a3a"></div>
<svg class="a" style="left:336.3px;top:994.4px" width="7" height="7" viewBox="0 0 7 7"><rect x="0.0" y="0.0" width="1.1" height="1.1" fill="#9a9a9a"/><rect x="2.5" y="0.0" width="1.1" height="1.1" fill="#9a9a9a"/><rect x="5.0" y="0.0" width="1.1" height="1.1" fill="#9a9a9a"/><rect x="0.0" y="2.5" width="1.1" height="1.1" fill="#9a9a9a"/><rect x="2.5" y="2.5" width="1.1" height="1.1" fill="#9a9a9a"/><rect x="5.0" y="2.5" width="1.1" height="1.1" fill="#9a9a9a"/><rect x="0.0" y="5.0" width="1.1" height="1.1" fill="#9a9a9a"/><rect x="2.5" y="5.0" width="1.1" height="1.1" fill="#9a9a9a"/><rect x="5.0" y="5.0" width="1.1" height="1.1" fill="#9a9a9a"/></svg>
<div class="a" style="left:409.5px;top:986px;width:30.5px;height:23.5px;background:#4b4b4b;border:1px solid #252525;border-radius:4px;box-shadow:0 1px 0 #3a3a3a"></div>
<div class="t" style="left:414.9px;top:991px;font-size:12px;line-height:14px;height:14px;letter-spacing:-0.17px;">100</div>
<div class="a" style="left:465.5px;top:984px;width:1px;height:28px;background:#2a2a2a;"></div>
<div class="a" style="left:575px;top:984px;width:1px;height:28px;background:#2a2a2a;"></div>
<div class="a" style="left:1059px;top:984px;width:1px;height:28px;background:#2a2a2a;"></div>
<div class="t" style="left:471.7px;top:992px;font-size:11px;line-height:12px;height:12px;letter-spacing:-0.50px;">name</div>
<div class="a" style="left:502.5px;top:986px;width:47.5px;height:23.5px;background:#4b4b4b;border:1px solid #252525;border-radius:4px;box-shadow:0 1px 0 #3a3a3a"></div>
<div class="t" style="left:508.5px;top:991px;font-size:12px;line-height:14px;height:14px;letter-spacing:0.41px;">4_hurt</div>
<div class="t" style="left:583.5px;top:992px;font-size:11px;line-height:12px;height:12px;letter-spacing:0.03px;">current time:</div>
<div class="a" style="left:652.5px;top:986px;width:170px;height:23.5px;background:#4b4b4b;border:1px solid #252525;border-radius:4px;box-shadow:0 1px 0 #3a3a3a"></div>
<div class="t" style="left:734.0px;top:991px;font-size:12px;line-height:14px;height:14px;">0</div>
<div class="t" style="left:828.0px;top:988px;font-size:19px;line-height:21px;height:21px;color:#d0d0d0;">/</div>
<div class="a" style="left:841.5px;top:986px;width:169.5px;height:23.5px;background:#4b4b4b;border:1px solid #252525;border-radius:4px;box-shadow:0 1px 0 #3a3a3a"></div>
<div class="t" style="left:916.2px;top:991px;font-size:12px;line-height:14px;height:14px;letter-spacing:-0.17px;">400</div>
<div class="a" style="left:1066.5px;top:987px;width:28.5px;height:22px;background:#2f2f2f;border:1px solid #262626;border-radius:4px"></div>
<div class="a" style="left:1066.5px;top:989px;width:1px;height:18px;background:#8c8c8c;"></div>
<div class="a" style="left:1069px;top:1010px;width:24px;height:1px;background:#8c8c8c;"></div>
<svg class="a" style="left:1071.3px;top:988.7px" width="18" height="18" viewBox="0 0 18 18"><circle cx="9" cy="9" r="8.4" fill="#f4f4f4" stroke="#cfcfcf" stroke-width=".6"/><path d="M7.2 11.6H6.4a2.7 2.7 0 0 1 0-5.4h5.2a2.7 2.7 0 0 1 0 5.4h-1" fill="none" stroke="#333" stroke-width="1.5"/><path d="M8.4 9.4l2.4 2.2-2.4 2.2z" fill="#333" transform="translate(1.2,0) scale(-1,1) translate(-17.6,0)"/></svg>
<div class="a" style="left:1120.5px;top:987px;width:79.5px;height:20.5px;background:#4b4b4b;border:1px solid #252525;border-radius:4px;box-shadow:0 1px 0 #3a3a3a"></div>
<div class="a" style="left:1205.5px;top:987px;width:44px;height:20.5px;background:#4b4b4b;border:1px solid #252525;border-radius:4px;box-shadow:0 1px 0 #3a3a3a"></div>
<div class="t" style="left:1126.0px;top:991px;font-size:12px;line-height:14px;height:14px;letter-spacing:0.15px;">key selected</div>
<div class="t" style="left:1211.0px;top:991px;font-size:12px;line-height:14px;height:14px;letter-spacing:-0.07px;">key all</div>
<div class="a" style="left:1255px;top:983.5px;width:38.5px;height:28.5px;background:#4b4b4b;border:1px solid #252525;border-radius:5px;box-shadow:0 1px 0 #3a3a3a"></div>
<svg class="a" style="left:1266.3px;top:990.8px" width="16" height="15" viewBox="0 0 16 15"><rect x=".5" y=".5" width="14.6" height="13.6" fill="#77777e" stroke="#9c9ca4" stroke-width=".8"/><path d="M3 5.2h2.2L8 2.6v8.8L5.2 8.8H3z" fill="#f5a623"/><path d="M9.6 4.6q1.8 2.4 0 4.8M11.4 3.2q3 3.8 0 7.6" fill="none" stroke="#f5a623" stroke-width="1"/></svg>
<div class="a" style="left:144.5px;top:1013px;width:1755px;height:41px;background:#1f1f1f;border:1px solid #bdbdbd;border-right:none"></div>
<div class="a" style="left:145.5px;top:1042px;width:1763px;height:1.5px;background:#3a3a3a;"></div>
<div class="a" style="left:1899px;top:1013px;width:1px;height:29.5px;background:#a8a8a8;"></div>
<svg class="a" style="left:145px;top:1014px" width="1755" height="29" viewBox="0 0 1755 29"><rect x="0" y="23.4" width="1754" height="1.2" fill="#6a6a6a"/><rect x="-0.8" y="11" width="1.3" height="17.6" fill="#9a9a9a"/><rect x="21.2" y="15.4" width="1.1" height="13.2" fill="#808080"/><rect x="43.1" y="15.4" width="1.1" height="13.2" fill="#808080"/><rect x="65.1" y="15.4" width="1.1" height="13.2" fill="#808080"/><rect x="87.0" y="15.4" width="1.1" height="13.2" fill="#808080"/><rect x="108.9" y="15.4" width="1.1" height="13.2" fill="#808080"/><rect x="130.8" y="15.4" width="1.1" height="13.2" fill="#808080"/><rect x="152.7" y="15.4" width="1.1" height="13.2" fill="#808080"/><rect x="174.7" y="15.4" width="1.1" height="13.2" fill="#808080"/><rect x="196.6" y="15.4" width="1.1" height="13.2" fill="#808080"/><rect x="218.4" y="11" width="1.3" height="17.6" fill="#9a9a9a"/><rect x="240.4" y="15.4" width="1.1" height="13.2" fill="#808080"/><rect x="262.3" y="15.4" width="1.1" height="13.2" fill="#808080"/><rect x="284.3" y="15.4" width="1.1" height="13.2" fill="#808080"/><rect x="306.2" y="15.4" width="1.1" height="13.2" fill="#808080"/><rect x="328.1" y="15.4" width="1.1" height="13.2" fill="#808080"/><rect x="350.0" y="15.4" width="1.1" height="13.2" fill="#808080"/><rect x="371.9" y="15.4" width="1.1" height="13.2" fill="#808080"/><rect x="393.9" y="15.4" width="1.1" height="13.2" fill="#808080"/><rect x="415.8" y="15.4" width="1.1" height="13.2" fill="#808080"/><rect x="437.6" y="11" width="1.3" height="17.6" fill="#9a9a9a"/><rect x="459.6" y="15.4" width="1.1" height="13.2" fill="#808080"/><rect x="481.5" y="15.4" width="1.1" height="13.2" fill="#808080"/><rect x="503.5" y="15.4" width="1.1" height="13.2" fill="#808080"/><rect x="525.4" y="15.4" width="1.1" height="13.2" fill="#808080"/><rect x="547.3" y="15.4" width="1.1" height="13.2" fill="#808080"/><rect x="569.2" y="15.4" width="1.1" height="13.2" fill="#808080"/><rect x="591.1" y="15.4" width="1.1" height="13.2" fill="#808080"/><rect x="613.1" y="15.4" width="1.1" height="13.2" fill="#808080"/><rect x="635.0" y="15.4" width="1.1" height="13.2" fill="#808080"/><rect x="656.8" y="11" width="1.3" height="17.6" fill="#9a9a9a"/><rect x="678.8" y="15.4" width="1.1" height="13.2" fill="#808080"/><rect x="700.7" y="15.4" width="1.1" height="13.2" fill="#808080"/><rect x="722.7" y="15.4" width="1.1" height="13.2" fill="#808080"/><rect x="744.6" y="15.4" width="1.1" height="13.2" fill="#808080"/><rect x="766.5" y="15.4" width="1.1" height="13.2" fill="#808080"/><rect x="788.4" y="15.4" width="1.1" height="13.2" fill="#808080"/><rect x="810.3" y="15.4" width="1.1" height="13.2" fill="#808080"/><rect x="832.3" y="15.4" width="1.1" height="13.2" fill="#808080"/><rect x="854.2" y="15.4" width="1.1" height="13.2" fill="#808080"/><rect x="876.0" y="11" width="1.3" height="17.6" fill="#9a9a9a"/><rect x="898.0" y="15.4" width="1.1" height="13.2" fill="#808080"/><rect x="919.9" y="15.4" width="1.1" height="13.2" fill="#808080"/><rect x="941.9" y="15.4" width="1.1" height="13.2" fill="#808080"/><rect x="963.8" y="15.4" width="1.1" height="13.2" fill="#808080"/><rect x="985.7" y="15.4" width="1.1" height="13.2" fill="#808080"/><rect x="1007.6" y="15.4" width="1.1" height="13.2" fill="#808080"/><rect x="1029.5" y="15.4" width="1.1" height="13.2" fill="#808080"/><rect x="1051.5" y="15.4" width="1.1" height="13.2" fill="#808080"/><rect x="1073.4" y="15.4" width="1.1" height="13.2" fill="#808080"/><rect x="1095.2" y="11" width="1.3" height="17.6" fill="#9a9a9a"/><rect x="1117.2" y="15.4" width="1.1" height="13.2" fill="#808080"/><rect x="1139.1" y="15.4" width="1.1" height="13.2" fill="#808080"/><rect x="1161.1" y="15.4" width="1.1" height="13.2" fill="#808080"/><rect x="1183.0" y="15.4" width="1.1" height="13.2" fill="#808080"/><rect x="1204.9" y="15.4" width="1.1" height="13.2" fill="#808080"/><rect x="1226.8" y="15.4" width="1.1" height="13.2" fill="#808080"/><rect x="1248.7" y="15.4" width="1.1" height="13.2" fill="#808080"/><rect x="1270.7" y="15.4" width="1.1" height="13.2" fill="#808080"/><rect x="1292.6" y="15.4" width="1.1" height="13.2" fill="#808080"/><rect x="1314.4" y="11" width="1.3" height="17.6" fill="#9a9a9a"/><rect x="1336.4" y="15.4" width="1.1" height="13.2" fill="#808080"/><rect x="1358.3" y="15.4" width="1.1" height="13.2" fill="#808080"/><rect x="1380.3" y="15.4" width="1.1" height="13.2" fill="#808080"/><rect x="1402.2" y="15.4" width="1.1" height="13.2" fill="#808080"/><rect x="1424.1" y="15.4" width="1.1" height="13.2" fill="#808080"/><rect x="1446.0" y="15.4" width="1.1" height="13.2" fill="#808080"/><rect x="1467.9" y="15.4" width="1.1" height="13.2" fill="#808080"/><rect x="1489.9" y="15.4" width="1.1" height="13.2" fill="#808080"/><rect x="1511.8" y="15.4" width="1.1" height="13.2" fill="#808080"/><rect x="1533.6" y="11" width="1.3" height="17.6" fill="#9a9a9a"/><rect x="1555.6" y="15.4" width="1.1" height="13.2" fill="#808080"/><rect x="1577.5" y="15.4" width="1.1" height="13.2" fill="#808080"/><rect x="1599.5" y="15.4" width="1.1" height="13.2" fill="#808080"/><rect x="1621.4" y="15.4" width="1.1" height="13.2" fill="#808080"/><rect x="1643.3" y="15.4" width="1.1" height="13.2" fill="#808080"/><rect x="1665.2" y="15.4" width="1.1" height="13.2" fill="#808080"/><rect x="1687.1" y="15.4" width="1.1" height="13.2" fill="#808080"/><rect x="1709.1" y="15.4" width="1.1" height="13.2" fill="#808080"/><rect x="1731.0" y="15.4" width="1.1" height="13.2" fill="#808080"/><rect x="1752.8" y="11" width="1.3" height="17.6" fill="#9a9a9a"/><rect x="393.8" y="8.6" width="5.6" height="18.8" rx=".8" fill="#e2e2e2" stroke="#777" stroke-width=".5"/><rect x="876.0" y="11" width="5.6" height="16.4" rx=".8" fill="#e2e2e2" stroke="#777" stroke-width=".5"/><rect x="1051.4" y="8.6" width="5.6" height="18.8" rx=".8" fill="#e2e2e2" stroke="#777" stroke-width=".5"/><rect x="1577.4" y="8.6" width="5.6" height="18.8" rx=".8" fill="#e2e2e2" stroke="#777" stroke-width=".5"/><rect x=".2" y="11" width="6" height="17.4" fill="#f28a8a" stroke="#e84a4a" stroke-width=".8"/><rect x=".2" y="9" width="2" height="3" fill="#e33"/></svg>
<div class="t" style="left:357.6px;top:1014px;font-size:11px;line-height:12px;height:12px;color:#d8d8d8;">50</div>
<div class="t" style="left:573.7px;top:1014px;font-size:11px;line-height:12px;height:12px;color:#d8d8d8;">100</div>
<div class="t" style="left:792.9px;top:1014px;font-size:11px;line-height:12px;height:12px;color:#d8d8d8;">150</div>
<div class="t" style="left:1012.1px;top:1014px;font-size:11px;line-height:12px;height:12px;color:#d8d8d8;">200</div>
<div class="t" style="left:1231.3px;top:1014px;font-size:11px;line-height:12px;height:12px;color:#d8d8d8;">250</div>
<div class="t" style="left:1450.5px;top:1014px;font-size:11px;line-height:12px;height:12px;color:#d8d8d8;">300</div>
<div class="t" style="left:1669.7px;top:1014px;font-size:11px;line-height:12px;height:12px;color:#d8d8d8;">350</div>
<div class="t" style="left:145.2px;top:1014px;font-size:9px;line-height:10px;height:10px;color:#999;">0</div>
<div class="a" style="left:1899.5px;top:1014px;width:10px;height:28px;background:#262626;"></div>
<svg class="a" style="left:1909.3px;top:1015px" width="9.5" height="12.2" viewBox="0 0 9.5 12.2"><rect x=".5" y=".5" width="8.5" height="11.2" rx="2.2" fill="#f59b24" stroke="#a66a1c" stroke-width=".6"/><rect x="3.25" y="4.6" width="3" height="3" fill="#111"/><rect x="4.25" y="5.6" width="1" height="1" fill="#fff"/></svg>
<svg class="a" style="left:1909.3px;top:1027.8px" width="9.5" height="13" viewBox="0 0 9.5 13"><rect x=".5" y=".5" width="8.5" height="12" rx="2.2" fill="#f59b24" stroke="#a66a1c" stroke-width=".6"/><rect x="3.25" y="5" width="3" height="3" fill="#111"/><rect x="4.25" y="6" width="1" height="1" fill="#fff"/></svg>
<div class="a" style="left:145.5px;top:1043.5px;width:1774px;height:10px;background:#2a2a2a;"></div>
<svg class="a" style="left:146.5px;top:1044px" width="14.5" height="9" viewBox="0 0 14.5 9"><rect x=".5" y=".5" width="13.5" height="8" rx="2.2" fill="#f59b24" stroke="#a66a1c" stroke-width=".6"/><rect x="5.75" y="3" width="3" height="3" fill="#111"/><rect x="6.75" y="4" width="1" height="1" fill="#fff"/></svg>
<svg class="a" style="left:1894.3px;top:1044px" width="14.5" height="9" viewBox="0 0 14.5 9"><rect x=".5" y=".5" width="13.5" height="8" rx="2.2" fill="#f59b24" stroke="#a66a1c" stroke-width=".6"/><rect x="5.75" y="3" width="3" height="3" fill="#111"/><rect x="6.75" y="4" width="1" height="1" fill="#fff"/></svg>
<div class="a" style="left:162.3px;top:1044.2px;width:1730px;height:8.6px;background:#f59b24;border-radius:2.5px"></div>
<div class="a" style="left:1909.8px;top:1044px;width:8.8px;height:9px;background:#ececec;"></div>
<div class="a" style="left:144.5px;top:1053.3px;width:1775px;height:1px;background:#c4c4c4;"></div>
<div class="a" style="left:0px;top:1055px;width:1920px;height:23px;background:#323232;"></div>
<div class="a" style="left:0px;top:1078.2px;width:1920px;height:2px;background:#6b5f45;"></div>
<div class="a" style="left:52px;top:1078.2px;width:58px;height:2px;background:#b8ae94;"></div>
<div class="a" style="left:175px;top:1078.2px;width:60px;height:2px;background:#b8ae94;"></div>
<div class="a" style="left:238px;top:1078.2px;width:58.5px;height:2px;background:#b8ae94;"></div>
<div class="a" style="left:300px;top:1078.2px;width:53px;height:2px;background:#b8ae94;"></div>
<div class="a" style="left:361.5px;top:1078.2px;width:58.5px;height:2px;background:#b8ae94;"></div>
<div class="a" style="left:423px;top:1078.2px;width:58.5px;height:2px;background:#b8ae94;"></div>
<div class="a" style="left:485.5px;top:1078.2px;width:58.5px;height:2px;background:#f4f2ee;"></div>
<svg class="a" style="left:700px;top:300px" width="460" height="400" viewBox="700 300 460 400"><defs><clipPath id="cbody"><path d="M822 478C812 500 810 540 818 575C826 605 850 638 885 658C905 668 925 675 945 675C975 675 1010 662 1042 646C1058 638 1070 630 1076 622C1072 605 1066 590 1058 581C1046 574 1037 562 1034 548C1032 538 1032 530 1031.5 522C1030 498 1018 460 980 440C930 420 850 430 822 478Z"/></clipPath><clipPath id="chand"><path d="M946.1 599Q948 593.5 955.3 591.9Q961 590.8 966.5 592.9Q970.5 595 973.6 598L980.8 602Q981.5 599 981.8 596Q982.8 590 984.8 585.8Q987.5 580 990.9 575.6Q993.5 570 997.1 565.4Q1000.5 561 1005.2 558.2Q1009 555.5 1013.4 555.2Q1018 555 1020.5 557.2Q1023.5 560.5 1023.5 565.4Q1026 569.5 1029.7 571Q1033 569.5 1037.8 568.9Q1044 568.5 1048 570.5Q1052 573 1052.1 576.6Q1052.5 581 1050 585.8Q1054 586.5 1056.1 589.8Q1059 593.5 1059.2 598Q1059 602.5 1057.2 606.1Q1060 611 1059.2 616.3Q1057.5 623 1053.1 628.5Q1049 631 1043.9 631.6Q1041 634.5 1036.8 636.7Q1031 641.5 1024.6 644.3Q1018 646.5 1011.3 645.9Q1001 644.5 990.9 640.8Q981.5 637.5 973.6 632.6Q965 628.5 958.3 622.4Q952.5 616 949.2 608.2Q946.5 603.5 946.1 599Z"/></clipPath><clipPath id="clh"><path d="M722 596Q717 596 717.5 600Q718 605 721 610Q719 613 719.3 617Q717.5 621 720 624.5Q725 629.5 733.5 632.5Q732 637 735 640Q739 644 746 642.5L759.3 638.5L769.6 635.5L773.3 644L775.6 655.6Q778 661 782.2 661.5Q787.5 660.5 789.6 656L789.5 649Q790 645.5 794 642.5Q794.5 636 791.9 630.4L787.4 620Q784 613 780 609.6Q777 605.5 772 603.5Q768 600.5 764 601.5L744.4 600L729.6 597Z"/></clipPath><clipPath id="ccap"><circle cx="980" cy="576" r="21.2"/></clipPath><g id="p021"><path d="M774.5 603C783 589 800 577.5 819 569.5L841 613.5C822 622.5 806 628.5 792 630.8C781 628 774.5 616 774.5 603Z" fill="#75979b" stroke="#4b696d" stroke-width="5" stroke-linejoin="round"/></g><g id="p016"><path d="M822 478C812 500 810 540 818 575C826 605 850 638 885 658C905 668 925 675 945 675C975 675 1010 662 1042 646C1058 638 1070 630 1076 622C1072 605 1066 590 1058 581C1046 574 1037 562 1034 548C1032 538 1032 530 1031.5 522C1030 498 1018 460 980 440C930 420 850 430 822 478Z" fill="#5b6177" stroke="#2f3444" stroke-width="5.4"/><g clip-path="url(#cbody)"><path d="M806 488L819.6 486L842 483.8L864 483L893.7 482.5Q903 484 908.5 487.8L927 495.2L938 504.4L947.4 513.7L956.7 523Q965 529 975.2 532.2L993.7 537.8L1019.6 543.3L1040 549L1050 430L806 430Z" fill="#303544"/></g></g><g id="p023"><path d="M1062 579.5L1066 579C1072 570 1082 554 1088.5 544.5Q1090.5 541.5 1093 544.5Q1097.5 551 1098.5 559Q1100 572 1099.7 585L1098.8 606L1117 601.2Q1121 600.3 1121.5 604L1121 611L1119.8 622.3L1137.5 625Q1142 626.3 1139 629L1111.8 642.3L1098.8 635.2L1084.5 641.5L1076.5 624L1045 640L1040 600Z" fill="#5b6177"/><path d="M1062 579.5L1066 579C1072 570 1082 554 1088.5 544.5Q1090.5 541.5 1093 544.5Q1097.5 551 1098.5 559Q1100 572 1099.7 585L1098.8 606L1117 601.2Q1121 600.3 1121.5 604L1121 611L1119.8 622.3L1137.5 625Q1142 626.3 1139 629L1111.8 642.3L1098.8 635.2L1084.5 641.5L1076.5 624" fill="none" stroke="#2f3444" stroke-width="6" stroke-linejoin="round" stroke-linecap="round"/></g><g id="p017"><ellipse cx="865.4" cy="381.5" rx="18.4" ry="8.2" fill="#6a7d64"/><ellipse cx="865.2" cy="381.6" rx="11.8" ry="4.8" fill="#8ea787"/><ellipse cx="1015.7" cy="397.2" rx="15.3" ry="7.6" fill="#6a7d64"/><ellipse cx="1015.2" cy="397.6" rx="7.6" ry="4.4" fill="#9dbb93"/><path d="M922.5 370L914.5 386L976 394L974.2 379Z" fill="#6a7d64"/><path d="M926.7 371L920.8 383.6L955 388.5L955 375Z" fill="#8ea787"/><path d="M961.7 377L961.7 390L968.3 391L968.3 380Z" fill="#a3c39a"/><path d="M959.2 318Q962 318.5 965 324.2L973.3 343.3L980 356.7Q984 366 983.8 371.7Q983 378 980.8 380.8L976.7 383.3L956.7 376.7L940 372.5L923.3 370.8L915 367.5Q911.5 364 912.5 359.2Q915 354 923.3 345Z" fill="#6a7d64"/><path d="M958.3 323.5L927 349Q918.5 358 918.5 361.5Q919 364.5 923 365.5L940 367.5L960.8 373.3L976.3 378.5Q978.5 376 978.3 371.7Q978 366 976.7 360L970 345Z" fill="#adcba1"/><path d="M939 341.5L927 349Q918.5 358 918.5 361.5Q919 364.5 923 365.5L925.5 365.8L928 359.5Z" fill="#8ea787"/><path d="M957.6 325L936.5 365.8L957 372L960 326Z" fill="#b8e0af"/><path d="M958.5 325L942 366L947 367.4L960.3 331Z" fill="#ecfbe6"/><path d="M974.5 356L977.8 368Q978.3 374 976.3 378L972 376.8Q974 368 974.5 356Z" fill="#9dbb93"/><path d="M811 444.5L826.5 397Q829 390.5 836.5 389.5L884 384L917 383.8L975 391L1000 396.5L1031 403L1046 408.5Q1053.5 411.5 1055.5 419L1058.5 431L1066.7 498Q1076 505 1079 519Q1079 529 1071.7 534.2Q1066 535.5 1055 532.5L1013.3 526.3L980 520L955 513.3Q946 510 944 505L938.3 497.5L935.8 485L934.3 474.8L906 475L848 478.5L819 483Q806 485 800 477Q796 470 797 464Q799 452 811 444.5Z" fill="#6a7d64"/><path d="M816.5 443.6L832.5 400.5Q834.5 397 841 396.5L890 392L940 393.3L981.7 398.3L1000 402.5L1029 409.5L1043 414.5Q1048.5 416.5 1050 421L1052.8 432L1060 500.5L1013.3 492.8L969.5 487.5L969.2 476.7L966.8 455L966 442Q965.5 434 959 433.5L930 433.3L906.7 434L848 439.5Z" fill="#8ea787"/><path d="M816.5 443.6L832.5 400.5Q834.5 397 841 396.5L889.3 392.2L892 435.3L848 439.5Z" fill="#adcba1"/><path d="M907.6 392.5L922.6 392.9L925.4 433.4L907 434Z" fill="#adcba1"/><path d="M855 395.3L872 393.6Q874.5 415 871.5 430Q869 436.5 861 437Q852.5 437 851.5 431Q850.5 412 855 395.3Z" fill="#bfe6b6"/><path d="M861 394.8L868.5 394Q869.5 410 867 420Q865.5 424 863 424Q859.5 424 859.3 420Q858.8 406 861 394.8Z" fill="#ecfbe6"/><path d="M1021 416.5Q1016 417 1016.5 422L1020.8 485Q1021.5 491 1028 491.5L1044 493Q1051 493 1050 486.5L1042 421.5Q1041.5 417 1037 417Z" fill="#aecba2"/><path d="M811.4 452.4L820 452.8L848 449.8L906.7 444L930 442.4L958 442.6Q961.5 443 961.8 447L963.8 478L965.5 489Q966 491.5 969 492L1013.3 496.3L1055 503L1064 505Q1069.5 509 1070.8 518.3Q1070 527 1065 529L1055 526.7L1013.3 520L980 513.5L957 507Q950 504 947.5 498L943.8 485L942.5 474Q942 466.5 936 466L930 465.7L906.7 466.7L848 470L819 475Q808 476.5 804 470Q802 463 805 458Q807.5 454 811.4 452.4Z" fill="#8ea787"/><path d="M811.4 452.4L820 452.8L848 449.8L906.7 444L930 442.4L958 442.6Q961.5 443 961.8 447L963.8 478L965.5 489Q966 491.5 969 492L1013.3 496.3L1055 503L1064 505Q1069 508 1070 514L1068 519L1055 518.3L1013.3 513.3L975 507Q958 504 954 495L951.7 480L950.5 462Q950 455.5 944 455.3L930 455.4L906.7 456.5L848 461.5L822 465.5Q810 467 806 462Q805 456 811.4 452.4Z" fill="#b4dcaa"/><path d="M826 457.5L892 449.5" stroke="#cdf0c5" stroke-width="9" stroke-linecap="round"/><path d="M836 455.8L889 449.2" stroke="#ecfbe6" stroke-width="6" stroke-linecap="round"/><path d="M952.3 444L961.3 444L963 478Q961 483 957.5 481Z" fill="#ecfbe6"/><path d="M1012 501.5L1056 510" stroke="#cdf0c5" stroke-width="9" stroke-linecap="round"/><path d="M1015 502.3L1051 509.5" stroke="#ecfbe6" stroke-width="6" stroke-linecap="round"/></g><g id="p018"><path d="M852 499.5Q858 503 857 519L849 519Z" fill="#c4820a"/><path d="M851 506.5Q855.5 510 854.8 518L849.5 518Z" fill="#f8ee00"/><path d="M833 517Q837.5 522.5 843 521.5L842.5 518Z" fill="#c4820a"/><path d="M835.5 518.5Q838.5 521.2 841.5 520.6L841 518.5Z" fill="#f8ee00"/><path d="M887.5 503Q883.5 511 886.5 522.5L894 523L893.5 507Z" fill="#c4820a"/><path d="M890.5 506.5Q886.8 514 889.5 522.6L893.5 523L893.5 508Z" fill="#f8ee00"/><path d="M904.5 522.5L903.5 526Q910 532 918 532.6L919.5 527Z" fill="#c4820a"/><path d="M905.5 523L904.8 526Q908.5 529.4 912.6 530L913.6 525.6Z" fill="#f8ee00"/><path d="M839.5 488Q841 486.5 845 488.5L854.3 494.6Q855 498 852.9 502L850.2 510.2L850.9 518.3Q847 520.5 842 519.7Q837 519 833.3 517Q828 514 825.8 510.9Q823.5 507 823.8 504Q825 500 828.5 498Q828.5 499.5 829.2 500.7Q829.5 504 831.2 506Q833.5 508 836 507.5Q839 506.5 840.7 504Q842.5 501 842 497.3Q841.5 494 840 492Q839 490 839.5 488Z" fill="#000"/><path d="M885.4 489.2Q887 487.2 889.5 487.2L902.3 487.9Q901.3 491 901.7 494Q902.5 499 905 503.4Q908 508 913.2 511.6Q917 514.5 920.6 515.6Q924 516.3 926 515Q928 513 927.4 510.9Q926 507.5 923.3 505.5Q927 507 929.4 510.2Q931.8 513.5 931.5 516.3Q931 520 928.7 523Q926 526 922 527.1Q917.5 527.7 913.2 526.5L905.7 523L896.2 523.7L891.5 522.4Q892 517 892.9 512.9L892.2 507.5Q889 505 886.8 502Q884.3 497 884 492.6Q884.3 490.5 885.4 489.2Z" fill="#000"/><path d="M830.6 526.5Q845 523.5 857.7 519" fill="none" stroke="#3a3f50" stroke-width="4" stroke-linecap="round"/><path d="M881.3 523.8Q892 525.5 903 529.2Q911 533 919.3 539.3" fill="none" stroke="#3a3f50" stroke-width="4" stroke-linecap="round"/><path d="M862.4 486.5L868.5 499.5M876 488L872.3 501.5" stroke="#3d4254" stroke-width="3.6" stroke-linecap="round"/><path d="M837.5 550.5C833 546.5 830 542.5 830.5 539C831.5 533 845 530 864 530.2C880 531 897 540 908.5 549C918 557 926 568 926 575C926 580 921 583 917 584" fill="none" stroke="#393e50" stroke-width="4.4" stroke-linecap="round"/><path d="M854 541.5Q863.5 538 873.3 541.3Q877.5 543.5 879.8 547" fill="none" stroke="#3a3f50" stroke-width="3.6" stroke-linecap="round"/><path d="M856.7 549L868.1 585" stroke="#3a3f50" stroke-width="2" stroke-linecap="round"/><path d="M867.4 550.7L867.8 557.8M876.1 554.8L873.3 565.6" stroke="#3a3f50" stroke-width="1.7" stroke-linecap="round"/></g><g id="p019"><circle cx="980" cy="576" r="27" fill="#546e68"/><circle cx="980" cy="576" r="21.2" fill="#a5ccd4"/><g clip-path="url(#ccap)"><ellipse cx="992" cy="566" rx="14" ry="11.5" fill="#7ea3ab"/><path d="M966 600Q970 588 979 582.5Q986 579 996 579L1005 600Z" fill="#7c9fa8" stroke="#55707a" stroke-width="2.2"/><path d="M980 560Q987 556.5 996 558.5M978.5 566Q987 570 998 568M984 557.5Q986 566 992 572M995 557Q990 564 980 571" fill="none" stroke="#587880" stroke-width="1.6" stroke-linecap="round"/></g></g><g id="p020"><path d="M946.1 599Q948 593.5 955.3 591.9Q961 590.8 966.5 592.9Q970.5 595 973.6 598L980.8 602Q981.5 599 981.8 596Q982.8 590 984.8 585.8Q987.5 580 990.9 575.6Q993.5 570 997.1 565.4Q1000.5 561 1005.2 558.2Q1009 555.5 1013.4 555.2Q1018 555 1020.5 557.2Q1023.5 560.5 1023.5 565.4Q1026 569.5 1029.7 571Q1033 569.5 1037.8 568.9Q1044 568.5 1048 570.5Q1052 573 1052.1 576.6Q1052.5 581 1050 585.8Q1054 586.5 1056.1 589.8Q1059 593.5 1059.2 598Q1059 602.5 1057.2 606.1Q1060 611 1059.2 616.3Q1057.5 623 1053.1 628.5Q1049 631 1043.9 631.6Q1041 634.5 1036.8 636.7Q1031 641.5 1024.6 644.3Q1018 646.5 1011.3 645.9Q1001 644.5 990.9 640.8Q981.5 637.5 973.6 632.6Q965 628.5 958.3 622.4Q952.5 616 949.2 608.2Q946.5 603.5 946.1 599Z" fill="#8fad86" stroke="#697f63" stroke-width="10.4" clip-path="url(#chand)"/><g clip-path="url(#chand)"><path d="M975 612Q985 606 998 606Q1008 609 1012 616Q1020 612 1034 614Q1040 622 1036 632L1010 642L985 634Z" fill="#86a27e"/><path d="M953.5 601Q955 596 962 596Q966 599 964 604Q961 610 962 616Q956 612 953.5 601Z" fill="#a9c99d"/><path d="M1011 560Q1017 559.5 1019 563Q1017 568 1010 570Q1003 574 999 582Q996 590 993 594Q989.5 592 991 585Q994 574 1001 566Q1005 561.5 1011 560Z" fill="#a9c99d"/><ellipse cx="1003" cy="590" rx="8" ry="3.6" fill="#a9c99d" transform="rotate(12 1003 590)"/><ellipse cx="1041.4" cy="577.4" rx="6.8" ry="4" fill="#a9c99d"/><ellipse cx="1050.6" cy="596.5" rx="4.4" ry="5.4" fill="#a9c99d"/><ellipse cx="1048.6" cy="616.5" rx="4.4" ry="7.6" fill="#a9c99d" transform="rotate(12 1048.6 616.5)"/><path d="M990 612Q996 608.5 1002 612Q1004 618 999 622Q995 628 990 626Q986.5 620 990 612Z" fill="#a9c99d"/><path d="M1000 584Q1014 590 1024.6 598Q1029 602 1031.7 606.5M1015.4 608Q1023 609 1030.7 612.4M974 600Q975.5 609 969.5 616.5M985 609.5Q991 604.5 997 605.6Q1006 607 1011.3 614.5M984.8 610.2L988 618.6M1005 570.5L1011.5 572.5M1023.5 581.5Q1027 582 1029.6 586Q1026 584.5 1023.5 585.5M1035.5 600Q1039 600.5 1042 603M1041.5 608.5Q1044.5 608.5 1046.5 611" fill="none" stroke="#5f7359" stroke-width="2.2" stroke-linecap="round"/><path d="M981 603Q982 592 988 582" fill="none" stroke="#697f63" stroke-width="3" stroke-linecap="round"/><path d="M1023.5 566Q1018 572 1012 576M1050 586Q1043 588 1037 593M1057 606.5Q1050 607 1044 610" fill="none" stroke="#697f63" stroke-width="2.6" stroke-linecap="round"/></g></g><g id="p022"><path d="M722 596Q717 596 717.5 600Q718 605 721 610Q719 613 719.3 617Q717.5 621 720 624.5Q725 629.5 733.5 632.5Q732 637 735 640Q739 644 746 642.5L759.3 638.5L769.6 635.5L773.3 644L775.6 655.6Q778 661 782.2 661.5Q787.5 660.5 789.6 656L789.5 649Q790 645.5 794 642.5Q794.5 636 791.9 630.4L787.4 620Q784 613 780 609.6Q777 605.5 772 603.5Q768 600.5 764 601.5L744.4 600L729.6 597Z" fill="#8eac86" stroke="#697f63" stroke-width="9" clip-path="url(#clh)"/><path d="M721 611.5Q729 614 737 614.5Q747 616.5 754.8 619.5Q762 623 766 627.5Q770 631 771 636M734 632.8Q742 629 748.9 629Q756 629.5 762.2 632M764.5 602.5Q769.5 606 767.5 611" fill="none" stroke="#697f63" stroke-width="3.4" stroke-linecap="round" stroke-linejoin="round"/></g></defs><use href="#p021"/><use href="#p016"/><use href="#p023"/><use href="#p017"/><use href="#p018"/><use href="#p019"/><use href="#p020"/><use href="#p022"/></svg>
<svg class="a" style="left:0;top:100px" width="158" height="400" viewBox="0 100 158 400"><path d="M43 114Q45.5 117 48 123Q53 129 53.7 132Q54 138 51 143Q48 147.5 45 147Q42 150 39.5 149Q38.5 147.5 41 143.5Q44 140 45 137.5Q41 136.5 37.5 133.5Q34 130.5 34.5 128.2Q35.5 127 37 128Q35 124 35.5 121.5Q37 120 38.5 122Q40 125 41.5 126.5Q40.5 120 41 115.5Q41.5 113.5 43 114Z" fill="#8fad86" stroke="#73896c" stroke-width="1"/><path d="M41.5 126.5L46.5 135.5M37 128L43.5 136.5M47 140.5L44 146" stroke="#6f8568" stroke-width="1" fill="none"/><use href="#p020" transform="translate(34.8 169.5) rotate(0) scale(0.305 0.32) translate(-1003 -600.5)"/><path d="M20.2 222Q19.5 210 28 205.5Q36 202 44.5 206Q51.5 211 50.5 223Q50 232 44 236Q36 239.5 28.5 235.5Q22.5 232 20.2 222Z" fill="#a6c8cf" stroke="#55707a" stroke-width="1.8"/><path d="M27 227Q27.5 219.5 37.5 218.5Q48.5 218.5 49.8 226Q49.5 232.5 43.5 235.3Q36 238.5 29.3 235Q26.8 232 27 227Z" fill="#7e9fa6" stroke="#5a7880" stroke-width="1"/><path d="M32.5 208.5L38 205.5L43.5 208L42.5 213L36 214.5L32.5 212ZM33 209L42.5 213M38 205.5L36 214.5M43.5 208L32.5 212" fill="#8fb0b6" stroke="#64848c" stroke-width=".8"/><use href="#p018" transform="translate(30.6 273.2) rotate(0) scale(0.425 0.425) translate(-877.5 -536)"/><use href="#p017" transform="translate(30.5 326.3) rotate(0) scale(0.174 0.186) translate(-938 -426.5)"/><path d="M8.5 385Q8.5 378 13 374.5L16 373L19 377.2L21.5 376.8L26 371Q27.5 370.3 27.9 372.5L28.5 381.5L31.8 380.8L32.3 385L35.6 386.6L30 390.6L28 389.2L25.5 390.8L24 388.3Q18 391.5 11 392.6Q8.5 390 8.5 385Z" fill="#5b6385"/><path d="M16 373L19 377.2L21.5 376.8L26 371Q27.5 370.3 27.9 372.5L28.5 381.5L31.8 380.8L32.3 385L35.6 386.6L30 390.6L28 389.2L25.5 390.8L24 388.3Q18 391.5 11 392.6" fill="none" stroke="#2f3444" stroke-width="1.1" stroke-linejoin="round"/><ellipse cx="28.4" cy="427" rx="21" ry="21.8" fill="#5b6177" stroke="#2f3444" stroke-width="2" transform="rotate(-15 28.4 427)"/><path d="M20 406.5Q34 402 44 413Q50.5 421.5 49.2 432Q46 425 38 423.5Q33 423 31 420Q30 415.5 25 413.5Q21 411.5 20 406.5Z" fill="#303546"/><path d="M7.5 473Q8 462.5 24 460.5Q40 459.5 48.5 465.5Q54 470.5 52.5 479Q50 488 36 489.5Q20 491 12 485.5Q7.5 481 7.5 473Z" fill="#7fa09f" stroke="#4f6e6e" stroke-width="3"/></svg>
</body></html>
